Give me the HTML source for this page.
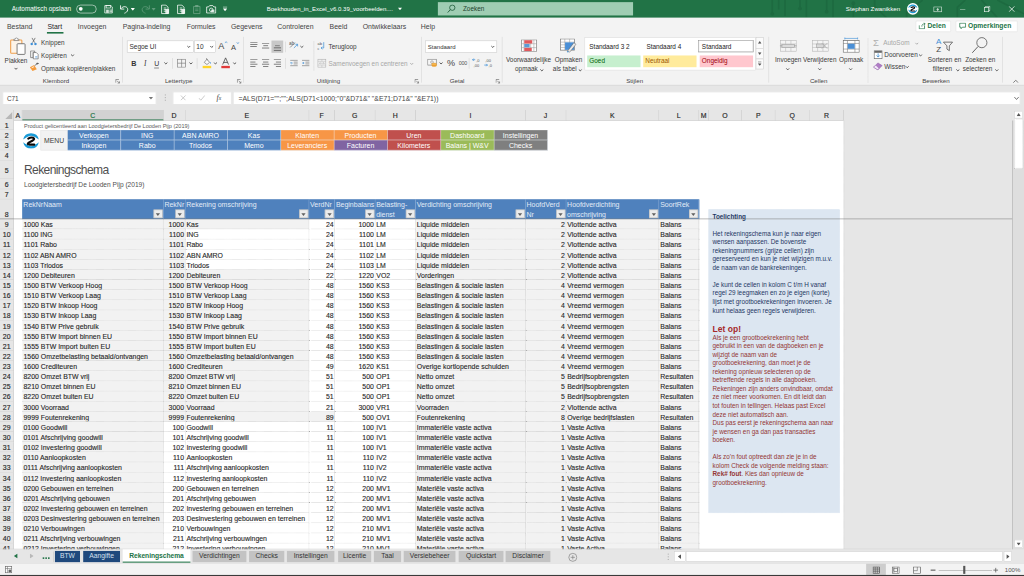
<!DOCTYPE html>
<html lang="nl"><head><meta charset="utf-8"><title>Boekhouden in Excel</title>
<style>
html,body{margin:0;padding:0;width:1024px;height:576px;overflow:hidden;background:#e6e6e6;}
#root{position:absolute;left:0;top:0;width:1920px;height:1080px;transform:scale(0.533333);transform-origin:0 0;font-family:"Liberation Sans",sans-serif;font-size:12px;color:#444;overflow:hidden;background:#e6e6e6;}
#root div,#root span,#root svg{position:absolute;box-sizing:border-box;white-space:nowrap;}
.ui{font-size:12px;color:#3b3b3b;line-height:16px;}
.c{text-align:center;}
.r{text-align:right;}
.b{font-weight:bold;}
.dis{color:#a6a6a6;}
.cell{-webkit-text-stroke:0.2px #262626;font-size:13px;line-height:21px;height:19px;color:#262626;overflow:hidden;background-clip:padding-box;border-right:1px dotted #a8a8a8;border-bottom:1px dotted #a8a8a8;}
.g{background:#f2f2f2;}
.w{background:#ffffff;}
.hd{background:#4f81bd;color:#e3ecf7;font-size:13.1px;line-height:19px;overflow:hidden;}
.rh{-webkit-text-stroke:0.3px #2b2b2b;left:0;width:26px;text-align:center;font-size:13px;color:#2b2b2b;line-height:21px;border-bottom:1px solid #cfcfcf;border-right:1px solid #c8c8c8;background:#e6e6e6;}
.ch{-webkit-text-stroke:0.3px currentColor;top:206px;height:19px;text-align:center;font-size:13px;color:#2b2b2b;line-height:21px;border-right:1px solid #c4c4c4;background:#e6e6e6;}
.mb{height:19px;color:#fff;font-size:13.1px;line-height:20px;text-align:center;border-right:1.5px solid #e8eef6;border-bottom:1.5px solid #e8eef6;}
.fb{width:17px;height:16px;background:#ececec;border:1px solid #b4b4b4;}
.fb:after{content:"";position:absolute;left:3.5px;top:5.5px;border-left:4px solid transparent;border-right:4px solid transparent;border-top:5px solid #606060;}
.tab{top:1032.5px;height:21px;font-size:12.6px;line-height:20px;text-align:center;color:#333;background:#c3c3c3;}
.sep{width:1px;background:#d4d4d4;top:69px;height:86px;}
.glabel{top:145px;font-size:11.6px;color:#444;line-height:14px;text-align:center;}
.dd:after{content:"";position:absolute;}
</style></head>
<body>
<div id="root">
<div class="" style="left:26px;top:225px;width:1556px;height:805px;background:#fff;"></div>
<div class="" style="left:0px;top:206px;width:1896px;height:20px;background:#e6e6e6;"></div>
<svg style="left:9px;top:209px" width="15" height="15" viewBox="0 0 15 15"><path d="M14 1 L14 14 L1 14 Z" fill="#b7b7b7"/></svg>
<div class="" style="left:25px;top:206px;width:1px;height:20px;background:#c4c4c4;"></div>
<div class="ch" style="left:26px;top:206px;width:16px;height:20px;">A</div>
<div class="ch" style="left:42px;top:206px;width:264.5px;height:20px;background:#d2d2d2;color:#217346;border-bottom:2.5px solid #217346;line-height:21px;">C</div>
<div class="ch" style="left:306.5px;top:206px;width:41.0px;height:20px;">D</div>
<div class="ch" style="left:347.5px;top:206px;width:232.0px;height:20px;">E</div>
<div class="ch" style="left:579.5px;top:206px;width:48.5px;height:20px;">F</div>
<div class="ch" style="left:628px;top:206px;width:75.5px;height:20px;">G</div>
<div class="ch" style="left:703.5px;top:206px;width:76.0px;height:20px;">H</div>
<div class="ch" style="left:779.5px;top:206px;width:206.0px;height:20px;">I</div>
<div class="ch" style="left:985.5px;top:206px;width:76.0px;height:20px;">J</div>
<div class="ch" style="left:1061.5px;top:206px;width:174.5px;height:20px;">K</div>
<div class="ch" style="left:1236px;top:206px;width:74.5px;height:20px;">L</div>
<div class="ch" style="left:1310.5px;top:206px;width:18.5px;height:20px;">M</div>
<div class="ch" style="left:1329px;top:206px;width:62px;height:20px;">O</div>
<div class="ch" style="left:1391px;top:206px;width:63px;height:20px;">P</div>
<div class="ch" style="left:1454px;top:206px;width:64px;height:20px;">Q</div>
<div class="ch" style="left:1518px;top:206px;width:64px;height:20px;">R</div>
<div class="" style="left:0px;top:225.2px;width:1582px;height:0.8px;background:#c9c9c9;"></div>
<div class="rh" style="left:0px;top:225px;width:26px;height:19px;">1</div>
<div class="rh" style="left:0px;top:244px;width:26px;height:19px;">2</div>
<div class="rh" style="left:0px;top:263px;width:26px;height:19px;">3</div>
<div class="rh" style="left:0px;top:282px;width:26px;height:19px;">4</div>
<div class="rh" style="left:0px;top:301px;width:26px;height:35px;line-height:39px;">5</div>
<div class="rh" style="left:0px;top:336px;width:26px;height:19px;">6</div>
<div class="rh" style="left:0px;top:355px;width:26px;height:19px;">7</div>
<div class="rh" style="left:0px;top:374px;width:26px;height:37px;line-height:56px;">8</div>
<div class="rh" style="left:0px;top:411px;width:26px;height:19px;">9</div>
<div class="rh" style="left:0px;top:430px;width:26px;height:19px;">10</div>
<div class="rh" style="left:0px;top:449px;width:26px;height:19px;">11</div>
<div class="rh" style="left:0px;top:468px;width:26px;height:19px;">12</div>
<div class="rh" style="left:0px;top:487px;width:26px;height:19px;">13</div>
<div class="rh" style="left:0px;top:506px;width:26px;height:19px;">14</div>
<div class="rh" style="left:0px;top:525px;width:26px;height:19px;">15</div>
<div class="rh" style="left:0px;top:544px;width:26px;height:19px;">16</div>
<div class="rh" style="left:0px;top:563px;width:26px;height:19px;">17</div>
<div class="rh" style="left:0px;top:582px;width:26px;height:19px;">18</div>
<div class="rh" style="left:0px;top:601px;width:26px;height:19px;">19</div>
<div class="rh" style="left:0px;top:620px;width:26px;height:19px;">20</div>
<div class="rh" style="left:0px;top:639px;width:26px;height:19px;">21</div>
<div class="rh" style="left:0px;top:658px;width:26px;height:19px;">22</div>
<div class="rh" style="left:0px;top:677px;width:26px;height:19px;">23</div>
<div class="rh" style="left:0px;top:696px;width:26px;height:19px;">24</div>
<div class="rh" style="left:0px;top:715px;width:26px;height:19px;">25</div>
<div class="rh" style="left:0px;top:734px;width:26px;height:19px;">26</div>
<div class="rh" style="left:0px;top:753px;width:26px;height:19px;">27</div>
<div class="rh" style="left:0px;top:772px;width:26px;height:19px;">28</div>
<div class="rh" style="left:0px;top:791px;width:26px;height:19px;">29</div>
<div class="rh" style="left:0px;top:810px;width:26px;height:19px;">30</div>
<div class="rh" style="left:0px;top:829px;width:26px;height:19px;">31</div>
<div class="rh" style="left:0px;top:848px;width:26px;height:19px;">32</div>
<div class="rh" style="left:0px;top:867px;width:26px;height:19px;">33</div>
<div class="rh" style="left:0px;top:886px;width:26px;height:19px;">34</div>
<div class="rh" style="left:0px;top:905px;width:26px;height:19px;">35</div>
<div class="rh" style="left:0px;top:924px;width:26px;height:19px;">36</div>
<div class="rh" style="left:0px;top:943px;width:26px;height:19px;">37</div>
<div class="rh" style="left:0px;top:962px;width:26px;height:19px;">38</div>
<div class="rh" style="left:0px;top:981px;width:26px;height:19px;">39</div>
<div class="rh" style="left:0px;top:1000px;width:26px;height:19px;">40</div>
<div class="rh" style="left:0px;top:1019px;width:26px;height:19px;">41</div>
<div class="" style="left:45px;top:229.3px;font-size:10.4px;color:#595959;line-height:15px;">Product gelicentieerd aan Loodgietersbedrijf De Looden Pijp (2019)</div>
<svg style="left:43.2px;top:249px" width="30.3" height="30.3" viewBox="0 0 32 32"><path d="M0.4 13.4 A16 16 0 0 1 31.6 13.4 Q27 10 24.5 8.6 Q16 2.6 7.5 8.6 Q5 10 0.4 13.4 Z" fill="#1a9bd7"/><path d="M0.4 18.6 A16 16 0 0 0 31.6 18.6 Q27 22 24.5 23.4 Q16 29.4 7.5 23.4 Q5 22 0.4 18.6 Z" fill="#1a9bd7"/><path d="M10.5 11.4 Q16 8.2 20.5 10 Q24.3 12.2 19.5 15.2 L11.5 19.5 Q7.2 22.8 12.5 23.3 L22.3 23.5" fill="none" stroke="#0c0c0c" stroke-width="4.2" stroke-linecap="round" stroke-linejoin="round"/></svg>
<div class="" style="left:76px;top:244px;width:51px;height:38px;background:#f2f2f2;border:1px solid #e3e3e3;"></div>
<div class="" style="left:76px;top:256px;font-size:12.8px;color:#3a3a3a;width:51px;text-align:center;line-height:18px;">MENU</div>
<div class="mb" style="left:126.5px;top:244px;width:100px;height:19px;background:#4f81bd;">Verkopen</div>
<div class="mb" style="left:226.5px;top:244px;width:100px;height:19px;background:#4f81bd;">ING</div>
<div class="mb" style="left:326.5px;top:244px;width:100px;height:19px;background:#4f81bd;">ABN AMRO</div>
<div class="mb" style="left:426.5px;top:244px;width:100px;height:19px;background:#4f81bd;">Kas</div>
<div class="mb" style="left:526.5px;top:244px;width:100px;height:19px;background:#f79646;">Klanten</div>
<div class="mb" style="left:626.5px;top:244px;width:100px;height:19px;background:#f79646;">Producten</div>
<div class="mb" style="left:726.5px;top:244px;width:100px;height:19px;background:#c0504d;">Uren</div>
<div class="mb" style="left:826.5px;top:244px;width:100px;height:19px;background:#9bbb59;">Dashboard</div>
<div class="mb" style="left:926.5px;top:244px;width:100px;height:19px;background:#7f7f7f;">Instellingen</div>
<div class="mb" style="left:126.5px;top:263px;width:100px;height:19px;background:#4f81bd;">Inkopen</div>
<div class="mb" style="left:226.5px;top:263px;width:100px;height:19px;background:#4f81bd;">Rabo</div>
<div class="mb" style="left:326.5px;top:263px;width:100px;height:19px;background:#4f81bd;">Triodos</div>
<div class="mb" style="left:426.5px;top:263px;width:100px;height:19px;background:#4f81bd;">Memo</div>
<div class="mb" style="left:526.5px;top:263px;width:100px;height:19px;background:#f79646;">Leveranciers</div>
<div class="mb" style="left:626.5px;top:263px;width:100px;height:19px;background:#8064a2;">Facturen</div>
<div class="mb" style="left:726.5px;top:263px;width:100px;height:19px;background:#c0504d;">Kilometers</div>
<div class="mb" style="left:826.5px;top:263px;width:100px;height:19px;background:#9bbb59;">Balans | W&amp;V</div>
<div class="mb" style="left:926.5px;top:263px;width:100px;height:19px;background:#7f7f7f;">Checks</div>
<div class="" style="left:45px;top:303px;font-size:22.6px;color:#505050;line-height:32px;letter-spacing:-1.15px;">Rekeningschema</div>
<div class="" style="left:45px;top:338px;font-size:12.4px;color:#505050;line-height:16px;">Loodgietersbedrijf De Looden Pijp (2019)</div>
<div class="" style="left:42px;top:374px;width:1268.5px;height:37px;background:#4f81bd;"></div>
<div class="hd" style="left:42px;top:374px;width:264.5px;height:37px;border-right:1px solid #a4bee0;"><span style="left:1.8px;top:1px">RekNrNaam</span><span style="left:1.8px;top:19px"></span></div>
<div class="fb" style="left:287.5px;top:393px;"></div>
<div class="hd" style="left:306.5px;top:374px;width:41.0px;height:37px;border-right:1px solid #a4bee0;"><span style="left:1.8px;top:1px">RekNr</span><span style="left:1.8px;top:19px"></span></div>
<div class="fb" style="left:328.5px;top:393px;"></div>
<div class="hd" style="left:347.5px;top:374px;width:232.0px;height:37px;border-right:1px solid #a4bee0;"><span style="left:1.8px;top:1px">Rekening omschrijving</span><span style="left:1.8px;top:19px"></span></div>
<div class="fb" style="left:560.5px;top:393px;"></div>
<div class="hd" style="left:579.5px;top:374px;width:48.5px;height:37px;border-right:1px solid #a4bee0;"><span style="left:1.8px;top:1px">VerdNr</span><span style="left:1.8px;top:19px"></span></div>
<div class="fb" style="left:609px;top:393px;"></div>
<div class="hd" style="left:628px;top:374px;width:75.5px;height:37px;border-right:1px solid #a4bee0;"><span style="left:1.8px;top:1px">Beginbalans</span><span style="left:1.8px;top:19px"></span></div>
<div class="fb" style="left:684.5px;top:393px;"></div>
<div class="hd" style="left:703.5px;top:374px;width:76.0px;height:37px;border-right:1px solid #a4bee0;"><span style="left:1.8px;top:1px">Belasting-</span><span style="left:1.8px;top:19px">dienst</span></div>
<div class="fb" style="left:760.5px;top:393px;"></div>
<div class="hd" style="left:779.5px;top:374px;width:206.0px;height:37px;border-right:1px solid #a4bee0;"><span style="left:1.8px;top:1px">Verdichting omschrijving</span><span style="left:1.8px;top:19px"></span></div>
<div class="fb" style="left:966.5px;top:393px;"></div>
<div class="hd" style="left:985.5px;top:374px;width:76.0px;height:37px;border-right:1px solid #a4bee0;"><span style="left:1.8px;top:1px">HoofdVerd</span><span style="left:1.8px;top:19px">Nr</span></div>
<div class="fb" style="left:1042.5px;top:393px;"></div>
<div class="hd" style="left:1061.5px;top:374px;width:174.5px;height:37px;border-right:1px solid #a4bee0;"><span style="left:1.8px;top:1px">Hoofdverdichting</span><span style="left:1.8px;top:19px">omschrijving</span></div>
<div class="fb" style="left:1217px;top:393px;"></div>
<div class="hd" style="left:1236px;top:374px;width:74.5px;height:37px;border-right:1px solid #a4bee0;"><span style="left:1.8px;top:1px">SoortRek</span><span style="left:1.8px;top:19px"></span></div>
<div class="fb" style="left:1291.5px;top:393px;"></div>
<div class="cell g" style="left:42px;top:411px;width:264.5px;height:19px;padding-left:2px;">1000 Kas</div>
<div class="cell g" style="left:306.5px;top:411px;width:41.0px;height:19px;text-align:right;padding-right:1.5px;">1000</div>
<div class="cell g" style="left:347.5px;top:411px;width:232.0px;height:19px;padding-left:2px;">Kas</div>
<div class="cell w" style="left:579.5px;top:411px;width:48.5px;height:19px;text-align:right;padding-right:1.5px;">24</div>
<div class="cell w" style="left:628px;top:411px;width:75.5px;height:19px;text-align:right;padding-right:1.5px;">1000</div>
<div class="cell w" style="left:703.5px;top:411px;width:76.0px;height:19px;padding-left:2px;">LM</div>
<div class="cell g" style="left:779.5px;top:411px;width:206.0px;height:19px;padding-left:2px;">Liquide middelen</div>
<div class="cell g" style="left:985.5px;top:411px;width:76.0px;height:19px;text-align:right;padding-right:1.5px;">2</div>
<div class="cell g" style="left:1061.5px;top:411px;width:174.5px;height:19px;padding-left:2px;">Vlottende activa</div>
<div class="cell g" style="left:1236px;top:411px;width:74.5px;height:19px;padding-left:2px;">Balans</div>
<div class="cell g" style="left:42px;top:430px;width:264.5px;height:19px;padding-left:2px;">1100 ING</div>
<div class="cell g" style="left:306.5px;top:430px;width:41.0px;height:19px;text-align:right;padding-right:1.5px;">1100</div>
<div class="cell w" style="left:347.5px;top:430px;width:232.0px;height:19px;padding-left:2px;">ING</div>
<div class="cell w" style="left:579.5px;top:430px;width:48.5px;height:19px;text-align:right;padding-right:1.5px;">24</div>
<div class="cell w" style="left:628px;top:430px;width:75.5px;height:19px;text-align:right;padding-right:1.5px;">1100</div>
<div class="cell w" style="left:703.5px;top:430px;width:76.0px;height:19px;padding-left:2px;">LM</div>
<div class="cell g" style="left:779.5px;top:430px;width:206.0px;height:19px;padding-left:2px;">Liquide middelen</div>
<div class="cell g" style="left:985.5px;top:430px;width:76.0px;height:19px;text-align:right;padding-right:1.5px;">2</div>
<div class="cell g" style="left:1061.5px;top:430px;width:174.5px;height:19px;padding-left:2px;">Vlottende activa</div>
<div class="cell g" style="left:1236px;top:430px;width:74.5px;height:19px;padding-left:2px;">Balans</div>
<div class="cell g" style="left:42px;top:449px;width:264.5px;height:19px;padding-left:2px;">1101 Rabo</div>
<div class="cell g" style="left:306.5px;top:449px;width:41.0px;height:19px;text-align:right;padding-right:1.5px;">1101</div>
<div class="cell w" style="left:347.5px;top:449px;width:232.0px;height:19px;padding-left:2px;">Rabo</div>
<div class="cell w" style="left:579.5px;top:449px;width:48.5px;height:19px;text-align:right;padding-right:1.5px;">24</div>
<div class="cell w" style="left:628px;top:449px;width:75.5px;height:19px;text-align:right;padding-right:1.5px;">1101</div>
<div class="cell w" style="left:703.5px;top:449px;width:76.0px;height:19px;padding-left:2px;">LM</div>
<div class="cell g" style="left:779.5px;top:449px;width:206.0px;height:19px;padding-left:2px;">Liquide middelen</div>
<div class="cell g" style="left:985.5px;top:449px;width:76.0px;height:19px;text-align:right;padding-right:1.5px;">2</div>
<div class="cell g" style="left:1061.5px;top:449px;width:174.5px;height:19px;padding-left:2px;">Vlottende activa</div>
<div class="cell g" style="left:1236px;top:449px;width:74.5px;height:19px;padding-left:2px;">Balans</div>
<div class="cell g" style="left:42px;top:468px;width:264.5px;height:19px;padding-left:2px;">1102 ABN AMRO</div>
<div class="cell g" style="left:306.5px;top:468px;width:41.0px;height:19px;text-align:right;padding-right:1.5px;">1102</div>
<div class="cell w" style="left:347.5px;top:468px;width:232.0px;height:19px;padding-left:2px;">ABN AMRO</div>
<div class="cell w" style="left:579.5px;top:468px;width:48.5px;height:19px;text-align:right;padding-right:1.5px;">24</div>
<div class="cell w" style="left:628px;top:468px;width:75.5px;height:19px;text-align:right;padding-right:1.5px;">1102</div>
<div class="cell w" style="left:703.5px;top:468px;width:76.0px;height:19px;padding-left:2px;">LM</div>
<div class="cell g" style="left:779.5px;top:468px;width:206.0px;height:19px;padding-left:2px;">Liquide middelen</div>
<div class="cell g" style="left:985.5px;top:468px;width:76.0px;height:19px;text-align:right;padding-right:1.5px;">2</div>
<div class="cell g" style="left:1061.5px;top:468px;width:174.5px;height:19px;padding-left:2px;">Vlottende activa</div>
<div class="cell g" style="left:1236px;top:468px;width:74.5px;height:19px;padding-left:2px;">Balans</div>
<div class="cell g" style="left:42px;top:487px;width:264.5px;height:19px;padding-left:2px;">1103 Triodos</div>
<div class="cell g" style="left:306.5px;top:487px;width:41.0px;height:19px;text-align:right;padding-right:1.5px;">1103</div>
<div class="cell w" style="left:347.5px;top:487px;width:232.0px;height:19px;padding-left:2px;">Triodos</div>
<div class="cell w" style="left:579.5px;top:487px;width:48.5px;height:19px;text-align:right;padding-right:1.5px;">24</div>
<div class="cell w" style="left:628px;top:487px;width:75.5px;height:19px;text-align:right;padding-right:1.5px;">1103</div>
<div class="cell w" style="left:703.5px;top:487px;width:76.0px;height:19px;padding-left:2px;">LM</div>
<div class="cell g" style="left:779.5px;top:487px;width:206.0px;height:19px;padding-left:2px;">Liquide middelen</div>
<div class="cell g" style="left:985.5px;top:487px;width:76.0px;height:19px;text-align:right;padding-right:1.5px;">2</div>
<div class="cell g" style="left:1061.5px;top:487px;width:174.5px;height:19px;padding-left:2px;">Vlottende activa</div>
<div class="cell g" style="left:1236px;top:487px;width:74.5px;height:19px;padding-left:2px;">Balans</div>
<div class="cell g" style="left:42px;top:506px;width:264.5px;height:19px;padding-left:2px;">1200 Debiteuren</div>
<div class="cell g" style="left:306.5px;top:506px;width:41.0px;height:19px;text-align:right;padding-right:1.5px;">1200</div>
<div class="cell g" style="left:347.5px;top:506px;width:232.0px;height:19px;padding-left:2px;">Debiteuren</div>
<div class="cell w" style="left:579.5px;top:506px;width:48.5px;height:19px;text-align:right;padding-right:1.5px;">22</div>
<div class="cell w" style="left:628px;top:506px;width:75.5px;height:19px;text-align:right;padding-right:1.5px;">1220</div>
<div class="cell w" style="left:703.5px;top:506px;width:76.0px;height:19px;padding-left:2px;">VO2</div>
<div class="cell g" style="left:779.5px;top:506px;width:206.0px;height:19px;padding-left:2px;">Vorderingen</div>
<div class="cell g" style="left:985.5px;top:506px;width:76.0px;height:19px;text-align:right;padding-right:1.5px;">2</div>
<div class="cell g" style="left:1061.5px;top:506px;width:174.5px;height:19px;padding-left:2px;">Vlottende activa</div>
<div class="cell g" style="left:1236px;top:506px;width:74.5px;height:19px;padding-left:2px;">Balans</div>
<div class="cell g" style="left:42px;top:525px;width:264.5px;height:19px;padding-left:2px;">1500 BTW Verkoop Hoog</div>
<div class="cell g" style="left:306.5px;top:525px;width:41.0px;height:19px;text-align:right;padding-right:1.5px;">1500</div>
<div class="cell g" style="left:347.5px;top:525px;width:232.0px;height:19px;padding-left:2px;">BTW Verkoop Hoog</div>
<div class="cell w" style="left:579.5px;top:525px;width:48.5px;height:19px;text-align:right;padding-right:1.5px;">48</div>
<div class="cell w" style="left:628px;top:525px;width:75.5px;height:19px;text-align:right;padding-right:1.5px;">1560</div>
<div class="cell w" style="left:703.5px;top:525px;width:76.0px;height:19px;padding-left:2px;">KS3</div>
<div class="cell g" style="left:779.5px;top:525px;width:206.0px;height:19px;padding-left:2px;">Belastingen &amp; sociale lasten</div>
<div class="cell g" style="left:985.5px;top:525px;width:76.0px;height:19px;text-align:right;padding-right:1.5px;">4</div>
<div class="cell g" style="left:1061.5px;top:525px;width:174.5px;height:19px;padding-left:2px;">Vreemd vermogen</div>
<div class="cell g" style="left:1236px;top:525px;width:74.5px;height:19px;padding-left:2px;">Balans</div>
<div class="cell g" style="left:42px;top:544px;width:264.5px;height:19px;padding-left:2px;">1510 BTW Verkoop Laag</div>
<div class="cell g" style="left:306.5px;top:544px;width:41.0px;height:19px;text-align:right;padding-right:1.5px;">1510</div>
<div class="cell g" style="left:347.5px;top:544px;width:232.0px;height:19px;padding-left:2px;">BTW Verkoop Laag</div>
<div class="cell w" style="left:579.5px;top:544px;width:48.5px;height:19px;text-align:right;padding-right:1.5px;">48</div>
<div class="cell w" style="left:628px;top:544px;width:75.5px;height:19px;text-align:right;padding-right:1.5px;">1560</div>
<div class="cell w" style="left:703.5px;top:544px;width:76.0px;height:19px;padding-left:2px;">KS3</div>
<div class="cell g" style="left:779.5px;top:544px;width:206.0px;height:19px;padding-left:2px;">Belastingen &amp; sociale lasten</div>
<div class="cell g" style="left:985.5px;top:544px;width:76.0px;height:19px;text-align:right;padding-right:1.5px;">4</div>
<div class="cell g" style="left:1061.5px;top:544px;width:174.5px;height:19px;padding-left:2px;">Vreemd vermogen</div>
<div class="cell g" style="left:1236px;top:544px;width:74.5px;height:19px;padding-left:2px;">Balans</div>
<div class="cell g" style="left:42px;top:563px;width:264.5px;height:19px;padding-left:2px;">1520 BTW Inkoop Hoog</div>
<div class="cell g" style="left:306.5px;top:563px;width:41.0px;height:19px;text-align:right;padding-right:1.5px;">1520</div>
<div class="cell g" style="left:347.5px;top:563px;width:232.0px;height:19px;padding-left:2px;">BTW Inkoop Hoog</div>
<div class="cell w" style="left:579.5px;top:563px;width:48.5px;height:19px;text-align:right;padding-right:1.5px;">48</div>
<div class="cell w" style="left:628px;top:563px;width:75.5px;height:19px;text-align:right;padding-right:1.5px;">1560</div>
<div class="cell w" style="left:703.5px;top:563px;width:76.0px;height:19px;padding-left:2px;">KS3</div>
<div class="cell g" style="left:779.5px;top:563px;width:206.0px;height:19px;padding-left:2px;">Belastingen &amp; sociale lasten</div>
<div class="cell g" style="left:985.5px;top:563px;width:76.0px;height:19px;text-align:right;padding-right:1.5px;">4</div>
<div class="cell g" style="left:1061.5px;top:563px;width:174.5px;height:19px;padding-left:2px;">Vreemd vermogen</div>
<div class="cell g" style="left:1236px;top:563px;width:74.5px;height:19px;padding-left:2px;">Balans</div>
<div class="cell g" style="left:42px;top:582px;width:264.5px;height:19px;padding-left:2px;">1530 BTW Inkoop Laag</div>
<div class="cell g" style="left:306.5px;top:582px;width:41.0px;height:19px;text-align:right;padding-right:1.5px;">1530</div>
<div class="cell g" style="left:347.5px;top:582px;width:232.0px;height:19px;padding-left:2px;">BTW Inkoop Laag</div>
<div class="cell w" style="left:579.5px;top:582px;width:48.5px;height:19px;text-align:right;padding-right:1.5px;">48</div>
<div class="cell w" style="left:628px;top:582px;width:75.5px;height:19px;text-align:right;padding-right:1.5px;">1560</div>
<div class="cell w" style="left:703.5px;top:582px;width:76.0px;height:19px;padding-left:2px;">KS3</div>
<div class="cell g" style="left:779.5px;top:582px;width:206.0px;height:19px;padding-left:2px;">Belastingen &amp; sociale lasten</div>
<div class="cell g" style="left:985.5px;top:582px;width:76.0px;height:19px;text-align:right;padding-right:1.5px;">4</div>
<div class="cell g" style="left:1061.5px;top:582px;width:174.5px;height:19px;padding-left:2px;">Vreemd vermogen</div>
<div class="cell g" style="left:1236px;top:582px;width:74.5px;height:19px;padding-left:2px;">Balans</div>
<div class="cell g" style="left:42px;top:601px;width:264.5px;height:19px;padding-left:2px;">1540 BTW Prive gebruik</div>
<div class="cell g" style="left:306.5px;top:601px;width:41.0px;height:19px;text-align:right;padding-right:1.5px;">1540</div>
<div class="cell g" style="left:347.5px;top:601px;width:232.0px;height:19px;padding-left:2px;">BTW Prive gebruik</div>
<div class="cell w" style="left:579.5px;top:601px;width:48.5px;height:19px;text-align:right;padding-right:1.5px;">48</div>
<div class="cell w" style="left:628px;top:601px;width:75.5px;height:19px;text-align:right;padding-right:1.5px;">1560</div>
<div class="cell w" style="left:703.5px;top:601px;width:76.0px;height:19px;padding-left:2px;">KS3</div>
<div class="cell g" style="left:779.5px;top:601px;width:206.0px;height:19px;padding-left:2px;">Belastingen &amp; sociale lasten</div>
<div class="cell g" style="left:985.5px;top:601px;width:76.0px;height:19px;text-align:right;padding-right:1.5px;">4</div>
<div class="cell g" style="left:1061.5px;top:601px;width:174.5px;height:19px;padding-left:2px;">Vreemd vermogen</div>
<div class="cell g" style="left:1236px;top:601px;width:74.5px;height:19px;padding-left:2px;">Balans</div>
<div class="cell g" style="left:42px;top:620px;width:264.5px;height:19px;padding-left:2px;">1550 BTW Import binnen EU</div>
<div class="cell g" style="left:306.5px;top:620px;width:41.0px;height:19px;text-align:right;padding-right:1.5px;">1550</div>
<div class="cell g" style="left:347.5px;top:620px;width:232.0px;height:19px;padding-left:2px;">BTW Import binnen EU</div>
<div class="cell w" style="left:579.5px;top:620px;width:48.5px;height:19px;text-align:right;padding-right:1.5px;">48</div>
<div class="cell w" style="left:628px;top:620px;width:75.5px;height:19px;text-align:right;padding-right:1.5px;">1560</div>
<div class="cell w" style="left:703.5px;top:620px;width:76.0px;height:19px;padding-left:2px;">KS3</div>
<div class="cell g" style="left:779.5px;top:620px;width:206.0px;height:19px;padding-left:2px;">Belastingen &amp; sociale lasten</div>
<div class="cell g" style="left:985.5px;top:620px;width:76.0px;height:19px;text-align:right;padding-right:1.5px;">4</div>
<div class="cell g" style="left:1061.5px;top:620px;width:174.5px;height:19px;padding-left:2px;">Vreemd vermogen</div>
<div class="cell g" style="left:1236px;top:620px;width:74.5px;height:19px;padding-left:2px;">Balans</div>
<div class="cell g" style="left:42px;top:639px;width:264.5px;height:19px;padding-left:2px;">1555 BTW Import buiten EU</div>
<div class="cell g" style="left:306.5px;top:639px;width:41.0px;height:19px;text-align:right;padding-right:1.5px;">1555</div>
<div class="cell g" style="left:347.5px;top:639px;width:232.0px;height:19px;padding-left:2px;">BTW Import buiten EU</div>
<div class="cell w" style="left:579.5px;top:639px;width:48.5px;height:19px;text-align:right;padding-right:1.5px;">48</div>
<div class="cell w" style="left:628px;top:639px;width:75.5px;height:19px;text-align:right;padding-right:1.5px;">1560</div>
<div class="cell w" style="left:703.5px;top:639px;width:76.0px;height:19px;padding-left:2px;">KS3</div>
<div class="cell g" style="left:779.5px;top:639px;width:206.0px;height:19px;padding-left:2px;">Belastingen &amp; sociale lasten</div>
<div class="cell g" style="left:985.5px;top:639px;width:76.0px;height:19px;text-align:right;padding-right:1.5px;">4</div>
<div class="cell g" style="left:1061.5px;top:639px;width:174.5px;height:19px;padding-left:2px;">Vreemd vermogen</div>
<div class="cell g" style="left:1236px;top:639px;width:74.5px;height:19px;padding-left:2px;">Balans</div>
<div class="cell g" style="left:42px;top:658px;width:264.5px;height:19px;padding-left:2px;">1560 Omzetbelasting betaald/ontvangen</div>
<div class="cell g" style="left:306.5px;top:658px;width:41.0px;height:19px;text-align:right;padding-right:1.5px;">1560</div>
<div class="cell g" style="left:347.5px;top:658px;width:232.0px;height:19px;padding-left:2px;">Omzetbelasting betaald/ontvangen</div>
<div class="cell w" style="left:579.5px;top:658px;width:48.5px;height:19px;text-align:right;padding-right:1.5px;">48</div>
<div class="cell w" style="left:628px;top:658px;width:75.5px;height:19px;text-align:right;padding-right:1.5px;">1560</div>
<div class="cell w" style="left:703.5px;top:658px;width:76.0px;height:19px;padding-left:2px;">KS3</div>
<div class="cell g" style="left:779.5px;top:658px;width:206.0px;height:19px;padding-left:2px;">Belastingen &amp; sociale lasten</div>
<div class="cell g" style="left:985.5px;top:658px;width:76.0px;height:19px;text-align:right;padding-right:1.5px;">4</div>
<div class="cell g" style="left:1061.5px;top:658px;width:174.5px;height:19px;padding-left:2px;">Vreemd vermogen</div>
<div class="cell g" style="left:1236px;top:658px;width:74.5px;height:19px;padding-left:2px;">Balans</div>
<div class="cell g" style="left:42px;top:677px;width:264.5px;height:19px;padding-left:2px;">1600 Crediteuren</div>
<div class="cell g" style="left:306.5px;top:677px;width:41.0px;height:19px;text-align:right;padding-right:1.5px;">1600</div>
<div class="cell g" style="left:347.5px;top:677px;width:232.0px;height:19px;padding-left:2px;">Crediteuren</div>
<div class="cell w" style="left:579.5px;top:677px;width:48.5px;height:19px;text-align:right;padding-right:1.5px;">49</div>
<div class="cell w" style="left:628px;top:677px;width:75.5px;height:19px;text-align:right;padding-right:1.5px;">1620</div>
<div class="cell w" style="left:703.5px;top:677px;width:76.0px;height:19px;padding-left:2px;">KS1</div>
<div class="cell g" style="left:779.5px;top:677px;width:206.0px;height:19px;padding-left:2px;">Overige kortlopende schulden</div>
<div class="cell g" style="left:985.5px;top:677px;width:76.0px;height:19px;text-align:right;padding-right:1.5px;">4</div>
<div class="cell g" style="left:1061.5px;top:677px;width:174.5px;height:19px;padding-left:2px;">Vreemd vermogen</div>
<div class="cell g" style="left:1236px;top:677px;width:74.5px;height:19px;padding-left:2px;">Balans</div>
<div class="cell g" style="left:42px;top:696px;width:264.5px;height:19px;padding-left:2px;">8200 Omzet BTW vrij</div>
<div class="cell g" style="left:306.5px;top:696px;width:41.0px;height:19px;text-align:right;padding-right:1.5px;">8200</div>
<div class="cell g" style="left:347.5px;top:696px;width:232.0px;height:19px;padding-left:2px;">Omzet BTW vrij</div>
<div class="cell w" style="left:579.5px;top:696px;width:48.5px;height:19px;text-align:right;padding-right:1.5px;">51</div>
<div class="cell w" style="left:628px;top:696px;width:75.5px;height:19px;text-align:right;padding-right:1.5px;">500</div>
<div class="cell w" style="left:703.5px;top:696px;width:76.0px;height:19px;padding-left:2px;">OP1</div>
<div class="cell g" style="left:779.5px;top:696px;width:206.0px;height:19px;padding-left:2px;">Netto omzet</div>
<div class="cell g" style="left:985.5px;top:696px;width:76.0px;height:19px;text-align:right;padding-right:1.5px;">5</div>
<div class="cell g" style="left:1061.5px;top:696px;width:174.5px;height:19px;padding-left:2px;">Bedrijfsopbrengsten</div>
<div class="cell g" style="left:1236px;top:696px;width:74.5px;height:19px;padding-left:2px;">Resultaten</div>
<div class="cell g" style="left:42px;top:715px;width:264.5px;height:19px;padding-left:2px;">8210 Omzet binnen EU</div>
<div class="cell g" style="left:306.5px;top:715px;width:41.0px;height:19px;text-align:right;padding-right:1.5px;">8210</div>
<div class="cell g" style="left:347.5px;top:715px;width:232.0px;height:19px;padding-left:2px;">Omzet binnen EU</div>
<div class="cell w" style="left:579.5px;top:715px;width:48.5px;height:19px;text-align:right;padding-right:1.5px;">51</div>
<div class="cell w" style="left:628px;top:715px;width:75.5px;height:19px;text-align:right;padding-right:1.5px;">500</div>
<div class="cell w" style="left:703.5px;top:715px;width:76.0px;height:19px;padding-left:2px;">OP1</div>
<div class="cell g" style="left:779.5px;top:715px;width:206.0px;height:19px;padding-left:2px;">Netto omzet</div>
<div class="cell g" style="left:985.5px;top:715px;width:76.0px;height:19px;text-align:right;padding-right:1.5px;">5</div>
<div class="cell g" style="left:1061.5px;top:715px;width:174.5px;height:19px;padding-left:2px;">Bedrijfsopbrengsten</div>
<div class="cell g" style="left:1236px;top:715px;width:74.5px;height:19px;padding-left:2px;">Resultaten</div>
<div class="cell g" style="left:42px;top:734px;width:264.5px;height:19px;padding-left:2px;">8220 Omzet buiten EU</div>
<div class="cell g" style="left:306.5px;top:734px;width:41.0px;height:19px;text-align:right;padding-right:1.5px;">8220</div>
<div class="cell g" style="left:347.5px;top:734px;width:232.0px;height:19px;padding-left:2px;">Omzet buiten EU</div>
<div class="cell w" style="left:579.5px;top:734px;width:48.5px;height:19px;text-align:right;padding-right:1.5px;">51</div>
<div class="cell w" style="left:628px;top:734px;width:75.5px;height:19px;text-align:right;padding-right:1.5px;">500</div>
<div class="cell w" style="left:703.5px;top:734px;width:76.0px;height:19px;padding-left:2px;">OP1</div>
<div class="cell g" style="left:779.5px;top:734px;width:206.0px;height:19px;padding-left:2px;">Netto omzet</div>
<div class="cell g" style="left:985.5px;top:734px;width:76.0px;height:19px;text-align:right;padding-right:1.5px;">5</div>
<div class="cell g" style="left:1061.5px;top:734px;width:174.5px;height:19px;padding-left:2px;">Bedrijfsopbrengsten</div>
<div class="cell g" style="left:1236px;top:734px;width:74.5px;height:19px;padding-left:2px;">Resultaten</div>
<div class="cell g" style="left:42px;top:753px;width:264.5px;height:19px;padding-left:2px;">3000 Voorraad</div>
<div class="cell g" style="left:306.5px;top:753px;width:41.0px;height:19px;text-align:right;padding-right:1.5px;">3000</div>
<div class="cell g" style="left:347.5px;top:753px;width:232.0px;height:19px;padding-left:2px;">Voorraad</div>
<div class="cell w" style="left:579.5px;top:753px;width:48.5px;height:19px;text-align:right;padding-right:1.5px;">21</div>
<div class="cell w" style="left:628px;top:753px;width:75.5px;height:19px;text-align:right;padding-right:1.5px;">3000</div>
<div class="cell w" style="left:703.5px;top:753px;width:76.0px;height:19px;padding-left:2px;">VR1</div>
<div class="cell g" style="left:779.5px;top:753px;width:206.0px;height:19px;padding-left:2px;">Voorraden</div>
<div class="cell g" style="left:985.5px;top:753px;width:76.0px;height:19px;text-align:right;padding-right:1.5px;">2</div>
<div class="cell g" style="left:1061.5px;top:753px;width:174.5px;height:19px;padding-left:2px;">Vlottende activa</div>
<div class="cell g" style="left:1236px;top:753px;width:74.5px;height:19px;padding-left:2px;">Balans</div>
<div class="cell g" style="left:42px;top:772px;width:264.5px;height:19px;padding-left:2px;">9999 Foutenrekening</div>
<div class="cell g" style="left:306.5px;top:772px;width:41.0px;height:19px;text-align:right;padding-right:1.5px;">9999</div>
<div class="cell g" style="left:347.5px;top:772px;width:232.0px;height:19px;padding-left:2px;">Foutenrekening</div>
<div class="cell g" style="left:579.5px;top:772px;width:48.5px;height:19px;text-align:right;padding-right:1.5px;">89</div>
<div class="cell w" style="left:628px;top:772px;width:75.5px;height:19px;text-align:right;padding-right:1.5px;">500</div>
<div class="cell w" style="left:703.5px;top:772px;width:76.0px;height:19px;padding-left:2px;">OV1</div>
<div class="cell g" style="left:779.5px;top:772px;width:206.0px;height:19px;padding-left:2px;">Foutenrekening</div>
<div class="cell g" style="left:985.5px;top:772px;width:76.0px;height:19px;text-align:right;padding-right:1.5px;">8</div>
<div class="cell g" style="left:1061.5px;top:772px;width:174.5px;height:19px;padding-left:2px;">Overige bedrijfslasten</div>
<div class="cell g" style="left:1236px;top:772px;width:74.5px;height:19px;padding-left:2px;">Resultaten</div>
<div class="cell g" style="left:42px;top:791px;width:264.5px;height:19px;padding-left:2px;">0100 Goodwill</div>
<div class="cell w" style="left:306.5px;top:791px;width:41.0px;height:19px;text-align:right;padding-right:1.5px;">100</div>
<div class="cell w" style="left:347.5px;top:791px;width:232.0px;height:19px;padding-left:2px;">Goodwill</div>
<div class="cell w" style="left:579.5px;top:791px;width:48.5px;height:19px;text-align:right;padding-right:1.5px;">11</div>
<div class="cell w" style="left:628px;top:791px;width:75.5px;height:19px;text-align:right;padding-right:1.5px;">100</div>
<div class="cell w" style="left:703.5px;top:791px;width:76.0px;height:19px;padding-left:2px;">IV1</div>
<div class="cell g" style="left:779.5px;top:791px;width:206.0px;height:19px;padding-left:2px;">Immateriële vaste activa</div>
<div class="cell g" style="left:985.5px;top:791px;width:76.0px;height:19px;text-align:right;padding-right:1.5px;">1</div>
<div class="cell g" style="left:1061.5px;top:791px;width:174.5px;height:19px;padding-left:2px;">Vaste Activa</div>
<div class="cell g" style="left:1236px;top:791px;width:74.5px;height:19px;padding-left:2px;">Balans</div>
<div class="cell g" style="left:42px;top:810px;width:264.5px;height:19px;padding-left:2px;">0101 Afschrijving goodwill</div>
<div class="cell w" style="left:306.5px;top:810px;width:41.0px;height:19px;text-align:right;padding-right:1.5px;">101</div>
<div class="cell w" style="left:347.5px;top:810px;width:232.0px;height:19px;padding-left:2px;">Afschrijving goodwill</div>
<div class="cell w" style="left:579.5px;top:810px;width:48.5px;height:19px;text-align:right;padding-right:1.5px;">11</div>
<div class="cell w" style="left:628px;top:810px;width:75.5px;height:19px;text-align:right;padding-right:1.5px;">100</div>
<div class="cell w" style="left:703.5px;top:810px;width:76.0px;height:19px;padding-left:2px;">IV1</div>
<div class="cell g" style="left:779.5px;top:810px;width:206.0px;height:19px;padding-left:2px;">Immateriële vaste activa</div>
<div class="cell g" style="left:985.5px;top:810px;width:76.0px;height:19px;text-align:right;padding-right:1.5px;">1</div>
<div class="cell g" style="left:1061.5px;top:810px;width:174.5px;height:19px;padding-left:2px;">Vaste Activa</div>
<div class="cell g" style="left:1236px;top:810px;width:74.5px;height:19px;padding-left:2px;">Balans</div>
<div class="cell g" style="left:42px;top:829px;width:264.5px;height:19px;padding-left:2px;">0102 Investering goodwill</div>
<div class="cell w" style="left:306.5px;top:829px;width:41.0px;height:19px;text-align:right;padding-right:1.5px;">102</div>
<div class="cell w" style="left:347.5px;top:829px;width:232.0px;height:19px;padding-left:2px;">Investering goodwill</div>
<div class="cell w" style="left:579.5px;top:829px;width:48.5px;height:19px;text-align:right;padding-right:1.5px;">11</div>
<div class="cell w" style="left:628px;top:829px;width:75.5px;height:19px;text-align:right;padding-right:1.5px;">100</div>
<div class="cell w" style="left:703.5px;top:829px;width:76.0px;height:19px;padding-left:2px;">IV1</div>
<div class="cell g" style="left:779.5px;top:829px;width:206.0px;height:19px;padding-left:2px;">Immateriële vaste activa</div>
<div class="cell g" style="left:985.5px;top:829px;width:76.0px;height:19px;text-align:right;padding-right:1.5px;">1</div>
<div class="cell g" style="left:1061.5px;top:829px;width:174.5px;height:19px;padding-left:2px;">Vaste Activa</div>
<div class="cell g" style="left:1236px;top:829px;width:74.5px;height:19px;padding-left:2px;">Balans</div>
<div class="cell g" style="left:42px;top:848px;width:264.5px;height:19px;padding-left:2px;">0110 Aanloopkosten</div>
<div class="cell w" style="left:306.5px;top:848px;width:41.0px;height:19px;text-align:right;padding-right:1.5px;">110</div>
<div class="cell w" style="left:347.5px;top:848px;width:232.0px;height:19px;padding-left:2px;">Aanloopkosten</div>
<div class="cell w" style="left:579.5px;top:848px;width:48.5px;height:19px;text-align:right;padding-right:1.5px;">11</div>
<div class="cell w" style="left:628px;top:848px;width:75.5px;height:19px;text-align:right;padding-right:1.5px;">110</div>
<div class="cell w" style="left:703.5px;top:848px;width:76.0px;height:19px;padding-left:2px;">IV2</div>
<div class="cell g" style="left:779.5px;top:848px;width:206.0px;height:19px;padding-left:2px;">Immateriële vaste activa</div>
<div class="cell g" style="left:985.5px;top:848px;width:76.0px;height:19px;text-align:right;padding-right:1.5px;">1</div>
<div class="cell g" style="left:1061.5px;top:848px;width:174.5px;height:19px;padding-left:2px;">Vaste Activa</div>
<div class="cell g" style="left:1236px;top:848px;width:74.5px;height:19px;padding-left:2px;">Balans</div>
<div class="cell g" style="left:42px;top:867px;width:264.5px;height:19px;padding-left:2px;">0111 Afschrijving aanloopkosten</div>
<div class="cell w" style="left:306.5px;top:867px;width:41.0px;height:19px;text-align:right;padding-right:1.5px;">111</div>
<div class="cell w" style="left:347.5px;top:867px;width:232.0px;height:19px;padding-left:2px;">Afschrijving aanloopkosten</div>
<div class="cell w" style="left:579.5px;top:867px;width:48.5px;height:19px;text-align:right;padding-right:1.5px;">11</div>
<div class="cell w" style="left:628px;top:867px;width:75.5px;height:19px;text-align:right;padding-right:1.5px;">110</div>
<div class="cell w" style="left:703.5px;top:867px;width:76.0px;height:19px;padding-left:2px;">IV2</div>
<div class="cell g" style="left:779.5px;top:867px;width:206.0px;height:19px;padding-left:2px;">Immateriële vaste activa</div>
<div class="cell g" style="left:985.5px;top:867px;width:76.0px;height:19px;text-align:right;padding-right:1.5px;">1</div>
<div class="cell g" style="left:1061.5px;top:867px;width:174.5px;height:19px;padding-left:2px;">Vaste Activa</div>
<div class="cell g" style="left:1236px;top:867px;width:74.5px;height:19px;padding-left:2px;">Balans</div>
<div class="cell g" style="left:42px;top:886px;width:264.5px;height:19px;padding-left:2px;">0112 Investering aanloopkosten</div>
<div class="cell w" style="left:306.5px;top:886px;width:41.0px;height:19px;text-align:right;padding-right:1.5px;">112</div>
<div class="cell w" style="left:347.5px;top:886px;width:232.0px;height:19px;padding-left:2px;">Investering aanloopkosten</div>
<div class="cell w" style="left:579.5px;top:886px;width:48.5px;height:19px;text-align:right;padding-right:1.5px;">11</div>
<div class="cell w" style="left:628px;top:886px;width:75.5px;height:19px;text-align:right;padding-right:1.5px;">110</div>
<div class="cell w" style="left:703.5px;top:886px;width:76.0px;height:19px;padding-left:2px;">IV2</div>
<div class="cell g" style="left:779.5px;top:886px;width:206.0px;height:19px;padding-left:2px;">Immateriële vaste activa</div>
<div class="cell g" style="left:985.5px;top:886px;width:76.0px;height:19px;text-align:right;padding-right:1.5px;">1</div>
<div class="cell g" style="left:1061.5px;top:886px;width:174.5px;height:19px;padding-left:2px;">Vaste Activa</div>
<div class="cell g" style="left:1236px;top:886px;width:74.5px;height:19px;padding-left:2px;">Balans</div>
<div class="cell g" style="left:42px;top:905px;width:264.5px;height:19px;padding-left:2px;">0200 Gebouwen en terreinen</div>
<div class="cell w" style="left:306.5px;top:905px;width:41.0px;height:19px;text-align:right;padding-right:1.5px;">200</div>
<div class="cell w" style="left:347.5px;top:905px;width:232.0px;height:19px;padding-left:2px;">Gebouwen en terreinen</div>
<div class="cell w" style="left:579.5px;top:905px;width:48.5px;height:19px;text-align:right;padding-right:1.5px;">12</div>
<div class="cell w" style="left:628px;top:905px;width:75.5px;height:19px;text-align:right;padding-right:1.5px;">200</div>
<div class="cell w" style="left:703.5px;top:905px;width:76.0px;height:19px;padding-left:2px;">MV1</div>
<div class="cell g" style="left:779.5px;top:905px;width:206.0px;height:19px;padding-left:2px;">Materiële vaste activa</div>
<div class="cell g" style="left:985.5px;top:905px;width:76.0px;height:19px;text-align:right;padding-right:1.5px;">1</div>
<div class="cell g" style="left:1061.5px;top:905px;width:174.5px;height:19px;padding-left:2px;">Vaste Activa</div>
<div class="cell g" style="left:1236px;top:905px;width:74.5px;height:19px;padding-left:2px;">Balans</div>
<div class="cell g" style="left:42px;top:924px;width:264.5px;height:19px;padding-left:2px;">0201 Afschrijving gebouwen</div>
<div class="cell w" style="left:306.5px;top:924px;width:41.0px;height:19px;text-align:right;padding-right:1.5px;">201</div>
<div class="cell w" style="left:347.5px;top:924px;width:232.0px;height:19px;padding-left:2px;">Afschrijving gebouwen</div>
<div class="cell w" style="left:579.5px;top:924px;width:48.5px;height:19px;text-align:right;padding-right:1.5px;">12</div>
<div class="cell w" style="left:628px;top:924px;width:75.5px;height:19px;text-align:right;padding-right:1.5px;">200</div>
<div class="cell w" style="left:703.5px;top:924px;width:76.0px;height:19px;padding-left:2px;">MV1</div>
<div class="cell g" style="left:779.5px;top:924px;width:206.0px;height:19px;padding-left:2px;">Materiële vaste activa</div>
<div class="cell g" style="left:985.5px;top:924px;width:76.0px;height:19px;text-align:right;padding-right:1.5px;">1</div>
<div class="cell g" style="left:1061.5px;top:924px;width:174.5px;height:19px;padding-left:2px;">Vaste Activa</div>
<div class="cell g" style="left:1236px;top:924px;width:74.5px;height:19px;padding-left:2px;">Balans</div>
<div class="cell g" style="left:42px;top:943px;width:264.5px;height:19px;padding-left:2px;">0202 Investering gebouwen en terreinen</div>
<div class="cell w" style="left:306.5px;top:943px;width:41.0px;height:19px;text-align:right;padding-right:1.5px;">202</div>
<div class="cell w" style="left:347.5px;top:943px;width:232.0px;height:19px;padding-left:2px;">Investering gebouwen en terreinen</div>
<div class="cell w" style="left:579.5px;top:943px;width:48.5px;height:19px;text-align:right;padding-right:1.5px;">12</div>
<div class="cell w" style="left:628px;top:943px;width:75.5px;height:19px;text-align:right;padding-right:1.5px;">200</div>
<div class="cell w" style="left:703.5px;top:943px;width:76.0px;height:19px;padding-left:2px;">MV1</div>
<div class="cell g" style="left:779.5px;top:943px;width:206.0px;height:19px;padding-left:2px;">Materiële vaste activa</div>
<div class="cell g" style="left:985.5px;top:943px;width:76.0px;height:19px;text-align:right;padding-right:1.5px;">1</div>
<div class="cell g" style="left:1061.5px;top:943px;width:174.5px;height:19px;padding-left:2px;">Vaste Activa</div>
<div class="cell g" style="left:1236px;top:943px;width:74.5px;height:19px;padding-left:2px;">Balans</div>
<div class="cell g" style="left:42px;top:962px;width:264.5px;height:19px;padding-left:2px;">0203 Desinvestering gebouwen en terreinen</div>
<div class="cell w" style="left:306.5px;top:962px;width:41.0px;height:19px;text-align:right;padding-right:1.5px;">203</div>
<div class="cell w" style="left:347.5px;top:962px;width:232.0px;height:19px;padding-left:2px;">Desinvestering gebouwen en terreinen</div>
<div class="cell w" style="left:579.5px;top:962px;width:48.5px;height:19px;text-align:right;padding-right:1.5px;">12</div>
<div class="cell w" style="left:628px;top:962px;width:75.5px;height:19px;text-align:right;padding-right:1.5px;">200</div>
<div class="cell w" style="left:703.5px;top:962px;width:76.0px;height:19px;padding-left:2px;">MV1</div>
<div class="cell g" style="left:779.5px;top:962px;width:206.0px;height:19px;padding-left:2px;">Materiële vaste activa</div>
<div class="cell g" style="left:985.5px;top:962px;width:76.0px;height:19px;text-align:right;padding-right:1.5px;">1</div>
<div class="cell g" style="left:1061.5px;top:962px;width:174.5px;height:19px;padding-left:2px;">Vaste Activa</div>
<div class="cell g" style="left:1236px;top:962px;width:74.5px;height:19px;padding-left:2px;">Balans</div>
<div class="cell g" style="left:42px;top:981px;width:264.5px;height:19px;padding-left:2px;">0210 Verbouwingen</div>
<div class="cell w" style="left:306.5px;top:981px;width:41.0px;height:19px;text-align:right;padding-right:1.5px;">210</div>
<div class="cell w" style="left:347.5px;top:981px;width:232.0px;height:19px;padding-left:2px;">Verbouwingen</div>
<div class="cell w" style="left:579.5px;top:981px;width:48.5px;height:19px;text-align:right;padding-right:1.5px;">12</div>
<div class="cell w" style="left:628px;top:981px;width:75.5px;height:19px;text-align:right;padding-right:1.5px;">210</div>
<div class="cell w" style="left:703.5px;top:981px;width:76.0px;height:19px;padding-left:2px;">MV1</div>
<div class="cell g" style="left:779.5px;top:981px;width:206.0px;height:19px;padding-left:2px;">Materiële vaste activa</div>
<div class="cell g" style="left:985.5px;top:981px;width:76.0px;height:19px;text-align:right;padding-right:1.5px;">1</div>
<div class="cell g" style="left:1061.5px;top:981px;width:174.5px;height:19px;padding-left:2px;">Vaste Activa</div>
<div class="cell g" style="left:1236px;top:981px;width:74.5px;height:19px;padding-left:2px;">Balans</div>
<div class="cell g" style="left:42px;top:1000px;width:264.5px;height:19px;padding-left:2px;">0211 Afschrijving verbouwingen</div>
<div class="cell w" style="left:306.5px;top:1000px;width:41.0px;height:19px;text-align:right;padding-right:1.5px;">211</div>
<div class="cell w" style="left:347.5px;top:1000px;width:232.0px;height:19px;padding-left:2px;">Afschrijving verbouwingen</div>
<div class="cell w" style="left:579.5px;top:1000px;width:48.5px;height:19px;text-align:right;padding-right:1.5px;">12</div>
<div class="cell w" style="left:628px;top:1000px;width:75.5px;height:19px;text-align:right;padding-right:1.5px;">210</div>
<div class="cell w" style="left:703.5px;top:1000px;width:76.0px;height:19px;padding-left:2px;">MV1</div>
<div class="cell g" style="left:779.5px;top:1000px;width:206.0px;height:19px;padding-left:2px;">Materiële vaste activa</div>
<div class="cell g" style="left:985.5px;top:1000px;width:76.0px;height:19px;text-align:right;padding-right:1.5px;">1</div>
<div class="cell g" style="left:1061.5px;top:1000px;width:174.5px;height:19px;padding-left:2px;">Vaste Activa</div>
<div class="cell g" style="left:1236px;top:1000px;width:74.5px;height:19px;padding-left:2px;">Balans</div>
<div class="cell g" style="left:42px;top:1019px;width:264.5px;height:19px;padding-left:2px;">0212 Investering verbouwingen</div>
<div class="cell w" style="left:306.5px;top:1019px;width:41.0px;height:19px;text-align:right;padding-right:1.5px;">212</div>
<div class="cell w" style="left:347.5px;top:1019px;width:232.0px;height:19px;padding-left:2px;">Investering verbouwingen</div>
<div class="cell w" style="left:579.5px;top:1019px;width:48.5px;height:19px;text-align:right;padding-right:1.5px;">12</div>
<div class="cell w" style="left:628px;top:1019px;width:75.5px;height:19px;text-align:right;padding-right:1.5px;">210</div>
<div class="cell w" style="left:703.5px;top:1019px;width:76.0px;height:19px;padding-left:2px;">MV1</div>
<div class="cell g" style="left:779.5px;top:1019px;width:206.0px;height:19px;padding-left:2px;">Materiële vaste activa</div>
<div class="cell g" style="left:985.5px;top:1019px;width:76.0px;height:19px;text-align:right;padding-right:1.5px;">1</div>
<div class="cell g" style="left:1061.5px;top:1019px;width:174.5px;height:19px;padding-left:2px;">Vaste Activa</div>
<div class="cell g" style="left:1236px;top:1019px;width:74.5px;height:19px;padding-left:2px;">Balans</div>
<div class="" style="left:1328px;top:392px;width:247px;height:570px;background:#dce6f1;border:1px dotted #eef3f9;"></div>
<div class="" style="left:1336px;top:399px;font-size:11.9px;font-weight:bold;color:#1f3864;line-height:15px;">Toelichting</div>
<div class="" style="left:1336px;top:431px;font-size:11.9px;color:#1f3864;line-height:15px;">Het rekeningschema kun je naar eigen</div>
<div class="" style="left:1336px;top:447.0px;font-size:11.9px;color:#1f3864;line-height:15px;">wensen aanpassen. De bovenste</div>
<div class="" style="left:1336px;top:463.0px;font-size:11.9px;color:#1f3864;line-height:15px;">rekeningnummers (grijze cellen) zijn</div>
<div class="" style="left:1336px;top:479.0px;font-size:11.9px;color:#1f3864;line-height:15px;">gereserveerd en kun je niet wijzigen m.u.v.</div>
<div class="" style="left:1336px;top:495.0px;font-size:11.9px;color:#1f3864;line-height:15px;">de naam van de bankrekeningen.</div>
<div class="" style="left:1336px;top:527.0px;font-size:11.9px;color:#1f3864;line-height:15px;">Je kunt de cellen in kolom C t/m H vanaf</div>
<div class="" style="left:1336px;top:543.0px;font-size:11.9px;color:#1f3864;line-height:15px;">regel 29 leegmaken en zo je eigen (korte)</div>
<div class="" style="left:1336px;top:559.0px;font-size:11.9px;color:#1f3864;line-height:15px;">lijst met grootboekrekeningen invoeren. Je</div>
<div class="" style="left:1336px;top:575.0px;font-size:11.9px;color:#1f3864;line-height:15px;">kunt helaas geen regels verwijderen.</div>
<div class="" style="left:1336px;top:606.5px;font-size:16px;font-weight:bold;color:#a5282a;line-height:20px;">Let op!</div>
<div class="" style="left:1336px;top:626px;font-size:11.9px;color:#943634;line-height:15px;">Als je een grootboekrekening hebt</div>
<div class="" style="left:1336px;top:642.0px;font-size:11.9px;color:#943634;line-height:15px;">gebruikt in een van de dagboeken en je</div>
<div class="" style="left:1336px;top:658.0px;font-size:11.9px;color:#943634;line-height:15px;">wijzigt de naam van de</div>
<div class="" style="left:1336px;top:674.0px;font-size:11.9px;color:#943634;line-height:15px;">grootboekrekening, dan moet je de</div>
<div class="" style="left:1336px;top:690.0px;font-size:11.9px;color:#943634;line-height:15px;">rekening opnieuw selecteren op de</div>
<div class="" style="left:1336px;top:706.0px;font-size:11.9px;color:#943634;line-height:15px;">betreffende regels in alle dagboeken.</div>
<div class="" style="left:1336px;top:722.0px;font-size:11.9px;color:#943634;line-height:15px;">Rekeningen zijn anders onvindbaar, omdat</div>
<div class="" style="left:1336px;top:738.0px;font-size:11.9px;color:#943634;line-height:15px;">ze niet meer voorkomen. En dit leidt dan</div>
<div class="" style="left:1336px;top:754.0px;font-size:11.9px;color:#943634;line-height:15px;">tot fouten in tellingen. Helaas past Excel</div>
<div class="" style="left:1336px;top:770.0px;font-size:11.9px;color:#943634;line-height:15px;">deze niet automatisch aan.</div>
<div class="" style="left:1336px;top:786.0px;font-size:11.9px;color:#943634;line-height:15px;">Dus pas eerst je rekeningschema aan naar</div>
<div class="" style="left:1336px;top:802.0px;font-size:11.9px;color:#943634;line-height:15px;">je wensen en ga dan pas transacties</div>
<div class="" style="left:1336px;top:818.0px;font-size:11.9px;color:#943634;line-height:15px;">boeken.</div>
<div class="" style="left:1336px;top:850.0px;font-size:11.9px;color:#943634;line-height:15px;">Als zo’n fout optreedt dan zie je in de</div>
<div class="" style="left:1336px;top:866.0px;font-size:11.9px;color:#943634;line-height:15px;">kolom Check de volgende melding staan:</div>
<div class="" style="left:1336px;top:882.0px;font-size:11.9px;color:#943634;line-height:15px;"><b>Rek# fout</b>. Kies dan opnieuw de</div>
<div class="" style="left:1336px;top:898.0px;font-size:11.9px;color:#943634;line-height:15px;">grootboekrekening.</div>
<div class="" style="left:1582px;top:225px;width:314px;height:805px;background:#e6e6e6;border-left:1px dotted #cfcfcf;"></div>
<div class="" style="left:0px;top:410.4px;width:1898px;height:1.1px;background:#7c7c7c;"></div>
<div class="" style="left:0px;top:1029px;width:1896px;height:1px;background:#c6c6c6;"></div>
<div class="" style="left:0px;top:0px;width:1920px;height:33.5px;background:#217346;"></div>
<svg style="left:1400px;top:0px" width="520" height="33" viewBox="0 0 520 33"><g fill="none" stroke="#1d6a40" stroke-width="3"><path d="M48 0 V24"/><path d="M60 0 V18"/><path d="M72 0 V30"/><path d="M100 0 V14"/><path d="M112 0 V33"/><path d="M150 0 V20"/><path d="M162 0 V33"/><path d="M200 6 V33"/><path d="M240 0 V12 L262 33"/><path d="M300 33 V22 L330 0"/><path d="M395 33 V14 L410 0"/><path d="M440 0 L470 33"/><path d="M470 0 L520 26"/></g><g fill="#1d6a40"><circle cx="48" cy="26" r="3.5"/><circle cx="100" cy="16" r="3.5"/><circle cx="150" cy="22" r="3.5"/><circle cx="200" cy="6" r="3.5"/></g></svg>
<div class="" style="left:22px;top:8px;font-size:12px;color:#fff;line-height:16px;">Automatisch opslaan</div>
<div class="" style="left:143px;top:8.5px;width:38px;height:16px;border:1.5px solid #fff;border-radius:8px;"></div>
<div class="" style="left:148px;top:13px;width:7px;height:7px;background:#fff;border-radius:4px;"></div>
<svg style="left:195px;top:9px" width="17" height="17" viewBox="0 0 17 17"><path d="M1.5 1.5 H13 L15.5 4 V15.5 H1.5 Z" fill="none" stroke="#fff" stroke-width="1.4"/><rect x="4" y="1.5" width="8" height="4.5" fill="none" stroke="#fff" stroke-width="1.2"/><rect x="4" y="9" width="5" height="6" fill="#fff" opacity=".8"/><path d="M10 10 h5 M10 13 h5" stroke="#fff" stroke-width="1.5"/></svg>
<svg style="left:223px;top:8px" width="20" height="18" viewBox="0 0 20 18"><path d="M3 2 V9 H10" fill="none" stroke="#fff" stroke-width="1.6"/><path d="M3.5 8.5 C8 2 17 4 16.5 10.5 C16 14 13 16 10 17" fill="none" stroke="#fff" stroke-width="1.6"/></svg>
<svg style="left:245px;top:15px" width="8" height="5" viewBox="0 0 8 5"><path d="M0 0 H8 L4 5 Z" fill="#fff"/></svg>
<svg style="left:263px;top:8px" width="20" height="18" viewBox="0 0 20 18"><path d="M17 2 V9 H10" fill="none" stroke="#5f9b7a" stroke-width="1.6"/><path d="M16.5 8.5 C12 2 3 4 3.5 10.5 C4 14 7 16 10 17" fill="none" stroke="#5f9b7a" stroke-width="1.6"/></svg>
<svg style="left:284px;top:15px" width="8" height="5" viewBox="0 0 8 5"><path d="M0 0 H8 L4 5 Z" fill="#5f9b7a"/></svg>
<svg style="left:301px;top:8px" width="18" height="19" viewBox="0 0 18 19"><g opacity="1"><path d="M2 1.5 H10 L14 5.5 V17.5 H2 Z" fill="none" stroke="#fff" stroke-width="1.5"/><path d="M6 7 h5 M6 10 h5 M6 13 h5" stroke="#fff" stroke-width="1.4"/><rect x="9" y="9" width="7" height="9" fill="#fff" opacity=".85"/></g></svg>
<svg style="left:331px;top:8px" width="18" height="19" viewBox="0 0 18 19"><g opacity="1"><path d="M2 1.5 H10 L14 5.5 V17.5 H2 Z" fill="none" stroke="#fff" stroke-width="1.5"/><path d="M6 7 h5 M6 10 h5 M6 13 h5" stroke="#fff" stroke-width="1.4"/><rect x="9" y="9" width="7" height="9" fill="#fff" opacity=".85"/></g></svg>
<svg style="left:361px;top:8px" width="18" height="19" viewBox="0 0 18 19"><g opacity=".35"><path d="M2 4 H14 V17.5 H2 Z" fill="none" stroke="#fff" stroke-width="1.5"/><rect x="5" y="1.5" width="6" height="4" fill="#fff"/><path d="M5 9 h6 M5 12 h6" stroke="#fff" stroke-width="1.3"/></g></svg>
<svg style="left:386px;top:9px" width="20" height="17" viewBox="0 0 20 17"><path d="M1.5 4 H5 L7 1.5 H13 L15 4 H18.5 V15.5 H1.5 Z" fill="none" stroke="#fff" stroke-width="1.5"/><circle cx="10" cy="9.5" r="3.3" fill="none" stroke="#fff" stroke-width="1.4"/><rect x="10" y="9" width="6" height="5" fill="#fff" opacity=".8"/></svg>
<svg style="left:417px;top:12px" width="10" height="10" viewBox="0 0 10 10"><path d="M1 1 H9" stroke="#fff" stroke-width="1.4"/><path d="M1 4 H9 L5 9 Z" fill="#fff"/></svg>
<div class="" style="left:500px;top:8px;font-size:11.3px;color:#fff;line-height:16px;">Boekhouden_in_Excel_v6.0.39_voorbeelden....</div>
<svg style="left:746px;top:14px" width="8" height="5" viewBox="0 0 8 5"><path d="M0 0 H8 L4 5 Z" fill="#fff"/></svg>
<div class="" style="left:821px;top:4px;width:366px;height:25px;background:#9fcdb3;"></div>
<svg style="left:838px;top:8px" width="17" height="17" viewBox="0 0 17 17"><circle cx="10" cy="6.5" r="5" fill="none" stroke="#1e5c3a" stroke-width="1.5"/><path d="M6.5 10 L1.5 15.5" stroke="#1e5c3a" stroke-width="1.7"/></svg>
<div class="" style="left:868px;top:8px;font-size:12px;color:#1b3f2b;line-height:16px;">Zoeken</div>
<div class="" style="left:1586px;top:8px;font-size:11.6px;color:#fff;line-height:16px;">Stephan Zwanikken</div>
<svg style="left:1700px;top:5px" width="23" height="23" viewBox="-5 -5 42 42"><circle cx="16" cy="16" r="20" fill="#fff"/><path d="M0.4 13.4 A16 16 0 0 1 31.6 13.4 Q27 10 24.5 8.6 Q16 2.6 7.5 8.6 Q5 10 0.4 13.4 Z" fill="#1a9bd7"/><path d="M0.4 18.6 A16 16 0 0 0 31.6 18.6 Q27 22 24.5 23.4 Q16 29.4 7.5 23.4 Q5 22 0.4 18.6 Z" fill="#1a9bd7"/><path d="M10.5 11.4 Q16 8.2 20.5 10 Q24.3 12.2 19.5 15.2 L11.5 19.5 Q7.2 22.8 12.5 23.3 L22.3 23.5" fill="none" stroke="#0c0c0c" stroke-width="4.2" stroke-linecap="round" stroke-linejoin="round"/></svg>
<svg style="left:1749.5px;top:11.5px" width="16.5" height="11" viewBox="0 0 16.5 11"><rect x="0.8" y="0.8" width="14.9" height="9.4" fill="none" stroke="#e6f0ea" stroke-width="1.4"/><path d="M5.5 6.5 L8.25 3.2 L11 6.5 Z" fill="#e6f0ea"/><path d="M8.25 5.5 V8.6" stroke="#e6f0ea" stroke-width="1.6"/></svg>
<div class="" style="left:1799.5px;top:16.6px;width:10.5px;height:1.4px;background:#fff;opacity:.7;"></div>
<svg style="left:1844.5px;top:10.5px" width="12" height="12" viewBox="0 0 12 12"><rect x="0.8" y="3" width="8" height="8" fill="none" stroke="#e6f0ea" stroke-width="1.3"/><path d="M3 3 V0.8 H11.2 V9 H9" fill="none" stroke="#e6f0ea" stroke-width="1.3"/></svg>
<svg style="left:1891px;top:10.5px" width="12" height="12" viewBox="0 0 12 12"><path d="M1 1 L11 11 M11 1 L1 11" stroke="#f0f6f2" stroke-width="1.5"/></svg>
<div class="" style="left:0px;top:33px;width:1920px;height:127px;background:#f3f3f3;"></div>
<div class="" style="left:13px;top:42px;font-size:13px;color:#444;line-height:17px;">Bestand</div>
<div class="" style="left:89px;top:42px;font-size:13px;color:#262626;line-height:17px;">Start</div>
<div class="" style="left:88px;top:60px;width:31px;height:3px;background:#217346;"></div>
<div class="" style="left:146px;top:42px;font-size:13px;color:#444;line-height:17px;">Invoegen</div>
<div class="" style="left:230px;top:42px;font-size:13px;color:#444;line-height:17px;">Pagina-indeling</div>
<div class="" style="left:350px;top:42px;font-size:13px;color:#444;line-height:17px;">Formules</div>
<div class="" style="left:433px;top:42px;font-size:13px;color:#444;line-height:17px;">Gegevens</div>
<div class="" style="left:520px;top:42px;font-size:13px;color:#444;line-height:17px;">Controleren</div>
<div class="" style="left:618px;top:42px;font-size:13px;color:#444;line-height:17px;">Beeld</div>
<div class="" style="left:680px;top:42px;font-size:13px;color:#444;line-height:17px;">Ontwikkelaars</div>
<div class="" style="left:789px;top:42px;font-size:13px;color:#444;line-height:17px;">Help</div>
<div class="" style="left:1716.5px;top:38.5px;width:66px;height:21px;background:#fff;border:1px solid #e1e1e1;border-radius:2px;"></div>
<svg style="left:1722px;top:42px" width="14" height="13" viewBox="0 0 14 13"><path d="M1.5 5.5 V12 H11.5 V5.5" fill="none" stroke="#217346" stroke-width="1.4"/><path d="M6.5 8 C6.5 4 8 2.5 12.5 2.5 M10 0.5 L12.8 2.6 L10 5" fill="none" stroke="#217346" stroke-width="1.3"/></svg>
<div class="" style="left:1739px;top:41px;font-size:12.6px;font-weight:bold;color:#217346;line-height:16px;">Delen</div>
<div class="" style="left:1792px;top:38.5px;width:115.5px;height:21px;background:#fff;border:1px solid #e1e1e1;border-radius:2px;"></div>
<svg style="left:1798px;top:42px" width="14" height="13" viewBox="0 0 14 13"><path d="M1.5 1.5 H12.5 V9 H6.5 L4 11.8 V9 H1.5 Z" fill="none" stroke="#217346" stroke-width="1.4"/></svg>
<div class="" style="left:1815px;top:41px;font-size:12.6px;font-weight:bold;color:#217346;line-height:16px;">Opmerkingen</div>
<div class="" style="left:0px;top:159px;width:1920px;height:2px;background:#dadada;"></div>
<svg style="left:18px;top:70px" width="32" height="34" viewBox="0 0 32 34"><rect x="2" y="5" width="21" height="25" rx="1.5" fill="#fdf4e8" stroke="#f0a04c" stroke-width="2"/><path d="M8 6 V3.5 H10.5 C10.5 0 15 0 15 3.5 H17.5 V6 Z" fill="#fff" stroke="#777" stroke-width="1.3"/><rect x="14" y="12" width="15" height="20" rx="1.5" fill="#fdfdfd" stroke="#666" stroke-width="1.6"/></svg>
<div class="ui" style="left:4px;top:106px;width:52px;text-align:center;">Plakken</div>
<svg style="left:26px;top:126px" width="8" height="6" viewBox="0 0 8 6"><path d="M1.2 1.2 L4 4 L6.8 1.2" fill="none" stroke="#4a4a4a" stroke-width="1.7"/></svg>
<svg style="left:56px;top:70px" width="14" height="16" viewBox="0 0 14 16"><path d="M4 1 L9 10 M10 1 L5 10" stroke="#555" stroke-width="1.3"/><circle cx="3.5" cy="12.5" r="2.3" fill="#3f8fd6"/><circle cx="10.5" cy="12.5" r="2.3" fill="#3f8fd6"/></svg>
<div class="ui" style="left:77px;top:72.5px;">Knippen</div>
<svg style="left:56px;top:94px" width="18" height="18" viewBox="0 0 18 18"><path d="M1.5 1.5 H9 V4 H6 V14 H1.5 Z" fill="#fafafa" stroke="#666" stroke-width="1.3"/><path d="M6.5 4.5 H12 L15.5 8 V16.5 H6.5 Z" fill="#fff" stroke="#666" stroke-width="1.3"/><path d="M10 12 h4 M10 14.5 h4" stroke="#4a8fd6" stroke-width="1"/></svg>
<div class="ui" style="left:77px;top:96.5px;">Kopiëren</div>
<svg style="left:132px;top:101px" width="8" height="6" viewBox="0 0 8 6"><path d="M1.2 1.2 L4 4 L6.8 1.2" fill="none" stroke="#4a4a4a" stroke-width="1.7"/></svg>
<svg style="left:55px;top:117px" width="20" height="17" viewBox="0 0 20 17"><path d="M1 9 L9 5 L14 13 L6 16 Z" fill="#f59b3c"/><path d="M4.5 10 L9 8" stroke="#fff" stroke-width="1.5"/><path d="M10 6 L16 1.5 M13 2 h5 M15 0 v4" stroke="#555" stroke-width="1.4" fill="none"/></svg>
<div class="ui" style="left:77px;top:120.5px;">Opmaak kopiëren/plakken</div>
<div class="glabel" style="left:60px;top:145px;width:90px;">Klembord</div>
<svg style="left:216px;top:148px" width="9" height="9" viewBox="0 0 9 9"><path d="M1 7 V1 H7" fill="none" stroke="#666" stroke-width="1.2"/><path d="M3.5 3.5 L8 8 M8 4.5 V8 H4.5" fill="none" stroke="#666" stroke-width="1.2"/></svg>
<div class="sep" style="left:229px;top:69px;width:1px;height:86px;"></div>
<div class="" style="left:238px;top:76px;width:125px;height:23px;background:#fff;border:1px solid #c6c6c6;"></div>
<div class="ui" style="left:243px;top:80px;font-size:12.3px;color:#333;letter-spacing:-0.2px;">Segoe UI</div>
<svg style="left:350px;top:85px" width="8" height="6" viewBox="0 0 8 6"><path d="M1.2 1.2 L4 4 L6.8 1.2" fill="none" stroke="#4a4a4a" stroke-width="1.7"/></svg>
<div class="" style="left:364px;top:76px;width:41px;height:23px;background:#fff;border:1px solid #c6c6c6;"></div>
<div class="ui" style="left:368px;top:80px;font-size:12.3px;color:#333;">10</div>
<svg style="left:393px;top:85px" width="8" height="6" viewBox="0 0 8 6"><path d="M1.2 1.2 L4 4 L6.8 1.2" fill="none" stroke="#4a4a4a" stroke-width="1.7"/></svg>
<div class="ui" style="left:409px;top:75px;font-size:17px;line-height:22px;color:#444;">A</div>
<svg style="left:421px;top:77px" width="6" height="5" viewBox="0 0 6 5"><path d="M0.5 4 L3 1 L5.5 4" fill="none" stroke="#3f8fd6" stroke-width="1.2"/></svg>
<div class="ui" style="left:433px;top:78px;font-size:14px;line-height:20px;color:#444;">A</div>
<svg style="left:443px;top:78px" width="6" height="5" viewBox="0 0 6 5"><path d="M0.5 1 L3 4 L5.5 1" fill="none" stroke="#3f8fd6" stroke-width="1.2"/></svg>
<div class="ui" style="left:246px;top:110px;font-size:13.5px;font-weight:bold;color:#333;line-height:18px;">B</div>
<div class="ui" style="left:270px;top:110px;font-size:13.5px;font-style:italic;font-family:'Liberation Serif',serif;color:#333;line-height:18px;">I</div>
<div class="ui" style="left:289px;top:110px;font-size:13px;color:#333;line-height:17px;border-bottom:1.2px solid #333;">U</div>
<svg style="left:307px;top:116px" width="8" height="6" viewBox="0 0 8 6"><path d="M1.2 1.2 L4 4 L6.8 1.2" fill="none" stroke="#4a4a4a" stroke-width="1.7"/></svg>
<div class="" style="left:323px;top:109px;width:1px;height:20px;background:#d0d0d0;"></div>
<svg style="left:332px;top:110px" width="17" height="17" viewBox="0 0 17 17"><rect x="1" y="1" width="15" height="15" fill="none" stroke="#777" stroke-width="1.2"/><path d="M8.5 1 V16 M1 8.5 H16" stroke="#777" stroke-width="1.2"/></svg>
<svg style="left:354px;top:116px" width="8" height="6" viewBox="0 0 8 6"><path d="M1.2 1.2 L4 4 L6.8 1.2" fill="none" stroke="#4a4a4a" stroke-width="1.7"/></svg>
<div class="" style="left:369px;top:109px;width:1px;height:20px;background:#d0d0d0;"></div>
<svg style="left:378px;top:107px" width="20" height="22" viewBox="0 0 20 22"><path d="M5 10 L10 4 L15 10 L10 14 Z" fill="#fafafa" stroke="#666" stroke-width="1.2"/><path d="M9 2 L11 6" stroke="#666" stroke-width="1.2"/><path d="M16.5 9 q1.8 2.5 0 4 q-1.8 -1.5 0 -4" fill="#3f8fd6"/><rect x="2" y="16.5" width="16" height="4.5" fill="#ffd428"/></svg>
<svg style="left:400px;top:116px" width="8" height="6" viewBox="0 0 8 6"><path d="M1.2 1.2 L4 4 L6.8 1.2" fill="none" stroke="#4a4a4a" stroke-width="1.7"/></svg>
<svg style="left:414px;top:107px" width="18" height="22" viewBox="0 0 18 22"><path d="M3.5 14 L9 1.5 L14.5 14 M5.5 10 H12.5" fill="none" stroke="#444" stroke-width="1.5"/><rect x="1" y="16.5" width="16" height="4.5" fill="#e03a3a"/></svg>
<svg style="left:436px;top:116px" width="8" height="6" viewBox="0 0 8 6"><path d="M1.2 1.2 L4 4 L6.8 1.2" fill="none" stroke="#4a4a4a" stroke-width="1.7"/></svg>
<div class="glabel" style="left:290px;top:145px;width:90px;">Lettertype</div>
<svg style="left:444px;top:148px" width="9" height="9" viewBox="0 0 9 9"><path d="M1 7 V1 H7" fill="none" stroke="#666" stroke-width="1.2"/><path d="M3.5 3.5 L8 8 M8 4.5 V8 H4.5" fill="none" stroke="#666" stroke-width="1.2"/></svg>
<div class="sep" style="left:456px;top:69px;width:1px;height:86px;"></div>
<svg style="left:468.8px;top:78.6px" width="14.3" height="9.600000000000009" viewBox="0 0 14.3 9.600000000000009"><rect x="0" y="0.0" width="14.3" height="1.5" fill="#666"/><rect x="0" y="3.8" width="14.3" height="1.5" fill="#666"/><rect x="0" y="7.6" width="12.5" height="1.5" fill="#666"/></svg>
<svg style="left:491px;top:81.3px" width="14.3" height="10.299999999999997" viewBox="0 0 14.3 10.299999999999997"><rect x="0.0" y="0.0" width="14.3" height="1.5" fill="#666"/><rect x="2.6500000000000004" y="4.0" width="9" height="1.5" fill="#666"/><rect x="0.0" y="8.3" width="14.3" height="1.5" fill="#666"/></svg>
<div class="" style="left:508.7px;top:75.8px;width:22px;height:23px;background:#c8c8c8;"></div>
<svg style="left:512.8px;top:85px" width="14.3" height="10.599999999999994" viewBox="0 0 14.3 10.599999999999994"><rect x="2.6500000000000004" y="0" width="9" height="1.5" fill="#555"/><rect x="0.0" y="4" width="14.3" height="1.5" fill="#555"/><rect x="0.0" y="8.6" width="14.3" height="1.5" fill="#555"/></svg>
<div class="" style="left:535px;top:78px;width:1px;height:20px;background:#d0d0d0;"></div>
<svg style="left:541px;top:75px" width="20" height="20" viewBox="0 0 20 20"><path d="M3 14 L12 5" stroke="#666" stroke-width="1.3"/><text x="1" y="10" font-size="9" fill="#555" font-family="Liberation Sans">ab</text><path d="M10 15 L17 8 M17 8 h-4 M17 8 v4" stroke="#3f8fd6" stroke-width="1.4" fill="none"/></svg>
<svg style="left:562px;top:85px" width="8" height="6" viewBox="0 0 8 6"><path d="M1.2 1.2 L4 4 L6.8 1.2" fill="none" stroke="#4a4a4a" stroke-width="1.7"/></svg>
<div class="" style="left:588px;top:74px;width:1px;height:58px;border-left:1px dotted #b8b8b8;"></div>
<svg style="left:595px;top:76px" width="17" height="19" viewBox="0 0 17 19"><text x="0" y="8" font-size="8" fill="#555" font-family="Liberation Sans">ab</text><text x="0" y="17" font-size="8" fill="#555" font-family="Liberation Sans">c</text><path d="M12 3 V14 H7 M9.5 11.5 L7 14 L9.5 16.5" fill="none" stroke="#3f8fd6" stroke-width="1.3"/></svg>
<div class="ui" style="left:616px;top:79px;">Terugloop</div>
<svg style="left:468.8px;top:111.2px" width="14.3" height="14.899999999999991" viewBox="0 0 14.3 14.899999999999991"><rect x="0" y="0.0" width="14.3" height="1.5" fill="#666"/><rect x="0" y="4.6" width="10" height="1.5" fill="#666"/><rect x="0" y="8.6" width="14.3" height="1.5" fill="#666"/><rect x="0" y="12.9" width="10" height="1.5" fill="#666"/></svg>
<svg style="left:491px;top:111.2px" width="14.3" height="14.899999999999991" viewBox="0 0 14.3 14.899999999999991"><rect x="0.0" y="0.0" width="14.3" height="1.5" fill="#666"/><rect x="2.1500000000000004" y="4.6" width="10" height="1.5" fill="#666"/><rect x="0.0" y="8.6" width="14.3" height="1.5" fill="#666"/><rect x="2.1500000000000004" y="12.9" width="10" height="1.5" fill="#666"/></svg>
<svg style="left:512.8px;top:111.2px" width="14.3" height="14.899999999999991" viewBox="0 0 14.3 14.899999999999991"><rect x="0.0" y="0.0" width="14.3" height="1.5" fill="#666"/><rect x="4.300000000000001" y="4.6" width="10" height="1.5" fill="#666"/><rect x="0.0" y="8.6" width="14.3" height="1.5" fill="#666"/><rect x="4.300000000000001" y="12.9" width="10" height="1.5" fill="#666"/></svg>
<div class="" style="left:535px;top:109px;width:1px;height:20px;background:#d0d0d0;"></div>
<svg style="left:543.5px;top:111px" width="15" height="16" viewBox="0 0 18 16"><path d="M0 1 H17 M8 5 H17 M8 9 H17 M0 13 H17" stroke="#666" stroke-width="1.3"/><path d="M6 7 H1 M3.2 4.8 L1 7 L3.2 9.2" stroke="#3f8fd6" stroke-width="1.4" fill="none"/></svg>
<svg style="left:566px;top:111px" width="15" height="16" viewBox="0 0 18 16"><path d="M0 1 H17 M8 5 H17 M8 9 H17 M0 13 H17" stroke="#666" stroke-width="1.3"/><path d="M0 7 H5 M2.8 4.8 L5 7 L2.8 9.2" stroke="#3f8fd6" stroke-width="1.4" fill="none"/></svg>
<svg style="left:595px;top:110px" width="17" height="17" viewBox="0 0 17 17"><rect x="1" y="1" width="15" height="15" fill="none" stroke="#aaa" stroke-width="1.2"/><path d="M1 5 H16 M1 12 H16 M8.5 1 V5 M8.5 12 V16" stroke="#bbb" stroke-width="1"/><path d="M4 8.5 H13 M6 6.5 L4 8.5 L6 10.5 M11 6.5 L13 8.5 L11 10.5" stroke="#b5b5b5" stroke-width="1.1" fill="none"/></svg>
<div class="ui dis" style="left:616px;top:112px;">Samenvoegen en centreren</div>
<svg style="left:768px;top:117px" width="8" height="6" viewBox="0 0 8 6"><path d="M1.2 1.2 L4 4 L6.8 1.2" fill="none" stroke="#aaa" stroke-width="1.7"/></svg>
<div class="glabel" style="left:571px;top:145px;width:90px;">Uitlijning</div>
<svg style="left:777px;top:148px" width="9" height="9" viewBox="0 0 9 9"><path d="M1 7 V1 H7" fill="none" stroke="#666" stroke-width="1.2"/><path d="M3.5 3.5 L8 8 M8 4.5 V8 H4.5" fill="none" stroke="#666" stroke-width="1.2"/></svg>
<div class="sep" style="left:790px;top:69px;width:1px;height:86px;"></div>
<div class="" style="left:797px;top:76px;width:135px;height:23px;background:#fff;border:1px solid #c6c6c6;"></div>
<div class="ui" style="left:802px;top:80px;font-size:11.3px;color:#333;">Standaard</div>
<svg style="left:920px;top:85px" width="8" height="6" viewBox="0 0 8 6"><path d="M1.2 1.2 L4 4 L6.8 1.2" fill="none" stroke="#4a4a4a" stroke-width="1.7"/></svg>
<svg style="left:801px;top:110px" width="19" height="17" viewBox="0 0 19 17"><rect x="1" y="1" width="16" height="11" fill="#f7f7f7" stroke="#777" stroke-width="1.2"/><circle cx="9" cy="6.5" r="2.5" fill="none" stroke="#777"/><ellipse cx="13" cy="13" rx="5" ry="2.2" fill="#f0a030"/><ellipse cx="13" cy="10.5" rx="5" ry="2.2" fill="#f8b84e" stroke="#d88a20" stroke-width=".6"/></svg>
<svg style="left:823px;top:116px" width="8" height="6" viewBox="0 0 8 6"><path d="M1.2 1.2 L4 4 L6.8 1.2" fill="none" stroke="#4a4a4a" stroke-width="1.7"/></svg>
<div class="ui" style="left:838px;top:106px;font-size:17px;line-height:24px;color:#444;">%</div>
<div class="ui" style="left:860px;top:112px;font-size:10px;line-height:14px;color:#555;letter-spacing:-0.3px;">000</div>
<div class="" style="left:879px;top:109px;width:1px;height:20px;background:#d0d0d0;"></div>
<svg style="left:885px;top:108px" width="18" height="20" viewBox="0 0 18 20"><path d="M6 4 H1 M3.2 1.8 L1 4 L3.2 6.2" stroke="#3f8fd6" stroke-width="1.4" fill="none"/><text x="8" y="8" font-size="7.5" fill="#555" font-family="Liberation Sans">,0</text><text x="3" y="18" font-size="7.5" fill="#555" font-family="Liberation Sans">,00</text></svg>
<svg style="left:907px;top:108px" width="18" height="20" viewBox="0 0 18 20"><text x="3" y="8" font-size="7.5" fill="#555" font-family="Liberation Sans">,00</text><path d="M1 14 H7 M4.8 11.8 L7 14 L4.8 16.2" stroke="#3f8fd6" stroke-width="1.4" fill="none"/><text x="9" y="18" font-size="7.5" fill="#555" font-family="Liberation Sans">,0</text></svg>
<div class="glabel" style="left:812px;top:145px;width:90px;">Getal</div>
<svg style="left:929px;top:148px" width="9" height="9" viewBox="0 0 9 9"><path d="M1 7 V1 H7" fill="none" stroke="#666" stroke-width="1.2"/><path d="M3.5 3.5 L8 8 M8 4.5 V8 H4.5" fill="none" stroke="#666" stroke-width="1.2"/></svg>
<div class="sep" style="left:941px;top:69px;width:1px;height:86px;"></div>
<svg style="left:977px;top:74px" width="30" height="23" viewBox="0 0 30 23"><rect x="0.7" y="0.7" width="28.6" height="21.6" fill="#fff" stroke="#777" stroke-width="1.3"/><path d="M0.7 8 H29.3 M0.7 15.3 H29.3 M5.5 0.7 V22.3 M18 0.7 V22.3 M24 0.7 V22.3" stroke="#9a9a9a" stroke-width="1"/><rect x="6" y="1.4" width="15" height="6.2" fill="#e0595d"/><rect x="6" y="8.5" width="10" height="6.3" fill="#5b9bd5"/><rect x="6" y="15.8" width="14" height="6" fill="#e0595d"/></svg>
<div class="ui" style="left:945px;top:105px;width:92px;text-align:center;">Voorwaardelijke</div>
<div class="ui" style="left:945px;top:122px;width:84px;text-align:center;">opmaak</div>
<svg style="left:1012px;top:129px" width="8" height="6" viewBox="0 0 8 6"><path d="M1.2 1.2 L4 4 L6.8 1.2" fill="none" stroke="#4a4a4a" stroke-width="1.7"/></svg>
<svg style="left:1050px;top:72px" width="32" height="27" viewBox="0 0 32 27"><rect x="1" y="1" width="26" height="21" fill="#fff" stroke="#777" stroke-width="1.3"/><path d="M1 7 H27 M1 12 H27 M1 17 H27 M9 1 V22 M18 1 V22" stroke="#999" stroke-width="1"/><rect x="9.5" y="7.5" width="17" height="14" fill="#4a8fd6"/><path d="M14 24 L26 8 L30 11 L18 26 Z" fill="#e8e8e8" stroke="#666" stroke-width="1"/><path d="M13 26.5 L14 23 L17 25.5 Z" fill="#3f8fd6"/></svg>
<div class="ui" style="left:1036px;top:105px;width:60px;text-align:center;">Opmaken</div>
<div class="ui" style="left:1030px;top:122px;width:58px;text-align:center;">als tabel</div>
<svg style="left:1084px;top:129px" width="8" height="6" viewBox="0 0 8 6"><path d="M1.2 1.2 L4 4 L6.8 1.2" fill="none" stroke="#4a4a4a" stroke-width="1.7"/></svg>
<div class="" style="left:1096px;top:70px;width:321px;height:62px;background:#fff;border:1px solid #d6d6d6;"></div>
<div class="ui" style="left:1105px;top:79px;color:#222;">Standaard 3 2</div>
<div class="ui" style="left:1212px;top:79px;color:#222;">Standaard 4</div>
<div class="" style="left:1309px;top:75px;width:104px;height:23px;border:1.5px solid #8c8c8c;background:#fff;box-shadow:inset 0 0 0 1px #d9d9d9;"></div>
<div class="ui" style="left:1316px;top:79px;color:#222;">Standaard</div>
<div class="" style="left:1101px;top:104px;width:100px;height:22px;background:#c6efce;"></div>
<div class="ui" style="left:1105px;top:107px;color:#006100;">Goed</div>
<div class="" style="left:1206px;top:104px;width:100px;height:22px;background:#ffeb9c;"></div>
<div class="ui" style="left:1210px;top:107px;color:#9c5700;">Neutraal</div>
<div class="" style="left:1312px;top:104px;width:100px;height:22px;background:#ffc7ce;"></div>
<div class="ui" style="left:1316px;top:107px;color:#9c0006;">Ongeldig</div>
<div class="" style="left:1417px;top:70px;width:15px;height:21px;background:#fbfbfb;border:1px solid #c9c9c9;"></div>
<div class="" style="left:1417px;top:90px;width:15px;height:21px;background:#fbfbfb;border:1px solid #c9c9c9;"></div>
<div class="" style="left:1417px;top:110px;width:15px;height:20px;background:#fbfbfb;border:1px solid #c9c9c9;"></div>
<svg style="left:1421px;top:77px" width="7" height="5" viewBox="0 0 7 5"><path d="M0 5 H7 L3.5 0 Z" fill="#555"/></svg>
<svg style="left:1421px;top:98px" width="7" height="5" viewBox="0 0 7 5"><path d="M0 0 H7 L3.5 5 Z" fill="#555"/></svg>
<svg style="left:1421px;top:115px" width="7" height="9" viewBox="0 0 7 9"><path d="M0 1 H7" stroke="#555" stroke-width="1.2"/><path d="M0 4 H7 L3.5 8.5 Z" fill="#555"/></svg>
<div class="glabel" style="left:1145px;top:145px;width:90px;">Stijlen</div>
<div class="sep" style="left:1441px;top:69px;width:1px;height:86px;"></div>
<svg style="left:1462px;top:73px" width="32" height="25" viewBox="0 0 32 25"><rect x="1" y="3" width="30" height="20" fill="#f4f4f4" stroke="#b4b4b4" stroke-width="1.1"/><path d="M1 9.5 H31 M1 16 H31 M11 3 V23 M21 3 V23" stroke="#b4b4b4" stroke-width="1"/><rect x="4" y="10" width="24" height="6" fill="#dcdcdc" stroke="#9a9a9a" stroke-width="1"/><path d="M0 13 h5 M27 13 h5" stroke="#9a9a9a" stroke-width="1.6"/></svg>
<div class="ui" style="left:1448px;top:105px;width:60px;text-align:center;">Invoegen</div>
<svg style="left:1473px;top:127px" width="8" height="6" viewBox="0 0 8 6"><path d="M1.2 1.2 L4 4 L6.8 1.2" fill="none" stroke="#4a4a4a" stroke-width="1.7"/></svg>
<svg style="left:1522px;top:73px" width="32" height="25" viewBox="0 0 32 25"><rect x="1" y="3" width="30" height="20" fill="#f4f4f4" stroke="#b4b4b4" stroke-width="1.1"/><path d="M1 9.5 H31 M1 16 H31 M11 3 V23 M21 3 V23" stroke="#b4b4b4" stroke-width="1"/><rect x="9" y="9.5" width="14" height="7" fill="#d9d9d9" stroke="#9a9a9a" stroke-width="1"/><path d="M19 8 L29 18 M29 8 L19 18" stroke="#b0b0b0" stroke-width="1.7"/></svg>
<div class="ui" style="left:1503px;top:105px;width:68px;text-align:center;">Verwijderen</div>
<svg style="left:1533px;top:127px" width="8" height="6" viewBox="0 0 8 6"><path d="M1.2 1.2 L4 4 L6.8 1.2" fill="none" stroke="#4a4a4a" stroke-width="1.7"/></svg>
<svg style="left:1580px;top:70px" width="32" height="29" viewBox="0 0 32 29"><path d="M4 2 H28 M4 0 V4 M28 0 V4" stroke="#3f8fd6" stroke-width="1.2"/><rect x="1" y="6" width="30" height="22" fill="#fff" stroke="#666" stroke-width="1.3"/><path d="M1 11.5 H31 M1 22 H31 M9 6 V28 M23 6 V28" stroke="#777" stroke-width="1"/><rect x="9.5" y="12" width="13" height="9.5" fill="#4a8fd6"/></svg>
<div class="ui" style="left:1567px;top:105px;width:58px;text-align:center;">Opmaak</div>
<svg style="left:1591px;top:127px" width="8" height="6" viewBox="0 0 8 6"><path d="M1.2 1.2 L4 4 L6.8 1.2" fill="none" stroke="#4a4a4a" stroke-width="1.7"/></svg>
<div class="glabel" style="left:1490px;top:145px;width:90px;">Cellen</div>
<div class="sep" style="left:1627px;top:69px;width:1px;height:86px;background:none;border-left:1px dotted #c4c4c4;"></div>
<div class="ui" style="left:1637px;top:68px;font-size:18px;line-height:24px;color:#b0b0b0;">Σ</div>
<div class="ui dis" style="left:1656px;top:73px;">AutoSom</div>
<svg style="left:1715px;top:79px" width="8" height="6" viewBox="0 0 8 6"><path d="M1.2 1.2 L4 4 L6.8 1.2" fill="none" stroke="#aaa" stroke-width="1.7"/></svg>
<svg style="left:1638px;top:94px" width="17" height="17" viewBox="0 0 17 17"><rect x="1" y="1" width="15" height="15" fill="#fff" stroke="#666" stroke-width="1.3"/><rect x="1.5" y="1.5" width="14" height="3.5" fill="#666"/><path d="M8.5 6 V13 M5.5 10 L8.5 13 L11.5 10" stroke="#3f8fd6" stroke-width="1.5" fill="none"/></svg>
<div class="ui" style="left:1658px;top:95px;">Doorvoeren</div>
<svg style="left:1722px;top:101px" width="8" height="6" viewBox="0 0 8 6"><path d="M1.2 1.2 L4 4 L6.8 1.2" fill="none" stroke="#4a4a4a" stroke-width="1.7"/></svg>
<svg style="left:1637px;top:116px" width="19" height="16" viewBox="0 0 19 16"><path d="M1 10 L9 2 L17 7 L9 15 Z" fill="#b07cc6" stroke="#8a56a6" stroke-width="1"/><path d="M1 10 L5 6 L11 12 L9 15 Z" fill="#f4ecf8" stroke="#8a56a6" stroke-width=".8"/></svg>
<div class="ui" style="left:1658px;top:117px;">Wissen</div>
<svg style="left:1697px;top:123px" width="8" height="6" viewBox="0 0 8 6"><path d="M1.2 1.2 L4 4 L6.8 1.2" fill="none" stroke="#4a4a4a" stroke-width="1.7"/></svg>
<svg style="left:1754px;top:70px" width="36" height="30" viewBox="0 0 36 30"><text x="1" y="12" font-size="15" fill="#3f8fd6" font-family="Liberation Sans">A</text><text x="1.5" y="28" font-size="15" fill="#444" font-family="Liberation Sans">Z</text><path d="M15 9 H32 L26 16 V25 L21.5 22 V16 Z" fill="none" stroke="#555" stroke-width="1.5"/></svg>
<div class="ui" style="left:1738px;top:105px;width:66px;text-align:center;">Sorteren en</div>
<div class="ui" style="left:1738px;top:122px;width:58px;text-align:center;">filteren</div>
<svg style="left:1792px;top:129px" width="8" height="6" viewBox="0 0 8 6"><path d="M1.2 1.2 L4 4 L6.8 1.2" fill="none" stroke="#4a4a4a" stroke-width="1.7"/></svg>
<svg style="left:1820px;top:69px" width="36" height="32" viewBox="0 0 36 32"><circle cx="21" cy="11" r="9.5" fill="none" stroke="#555" stroke-width="1.5"/><path d="M14 18 L3 30" stroke="#555" stroke-width="1.7"/></svg>
<div class="ui" style="left:1806px;top:105px;width:64px;text-align:center;">Zoeken en</div>
<div class="ui" style="left:1800px;top:122px;width:66px;text-align:center;">selecteren</div>
<svg style="left:1865px;top:129px" width="8" height="6" viewBox="0 0 8 6"><path d="M1.2 1.2 L4 4 L6.8 1.2" fill="none" stroke="#4a4a4a" stroke-width="1.7"/></svg>
<div class="glabel" style="left:1710px;top:145px;width:90px;">Bewerken</div>
<div class="sep" style="left:1879px;top:69px;width:1px;height:86px;"></div>
<svg style="left:1899px;top:149px" width="11" height="7" viewBox="0 0 11 7"><path d="M1 6 L5.5 1.5 L10 6" fill="none" stroke="#555" stroke-width="1.4"/></svg>
<div class="" style="left:0px;top:161px;width:1920px;height:45px;background:#e6e6e6;"></div>
<div class="" style="left:5px;top:171.5px;width:288px;height:24px;background:#fff;border:1px solid #dedede;"></div>
<div class="ui" style="left:13px;top:177px;font-size:12px;color:#444;">C71</div>
<svg style="left:279px;top:182px" width="8" height="4.5" viewBox="0 0 8 4.5"><path d="M0 0 H8 L4 4.5 Z" fill="#777"/></svg>
<div class="" style="left:309px;top:177px;width:2px;height:2px;background:#b0b0b0;"></div>
<div class="" style="left:309px;top:182px;width:2px;height:2px;background:#b0b0b0;"></div>
<div class="" style="left:309px;top:187px;width:2px;height:2px;background:#b0b0b0;"></div>
<div class="" style="left:324px;top:171.5px;width:110px;height:24px;background:#fff;border:1px solid #dedede;"></div>
<svg style="left:338px;top:178px" width="11" height="11" viewBox="0 0 11 11"><path d="M1 1 L10 10 M10 1 L1 10" stroke="#b5b5b5" stroke-width="1.3"/></svg>
<svg style="left:372px;top:178px" width="13" height="11" viewBox="0 0 13 11"><path d="M1 6 L4.5 10 L12 1" fill="none" stroke="#b5b5b5" stroke-width="1.3"/></svg>
<div class="ui" style="left:406px;top:174px;font-family:'Liberation Serif',serif;font-size:15px;line-height:18px;color:#444;"><i>f</i><span style="position:static;font-size:10.5px;font-style:italic;">x</span></div>
<div class="" style="left:437px;top:171.5px;width:1476px;height:24px;background:#fff;border:1px solid #dedede;"></div>
<div class="ui" style="left:447px;top:177px;font-size:12.9px;color:#444;">=ALS(D71="";"";ALS(D71&lt;1000;"0"&amp;D71&amp;" "&amp;E71;D71&amp;" "&amp;E71))</div>
<svg style="left:1901px;top:181px" width="10" height="7" viewBox="0 0 10 7"><path d="M1 1 L5 5.5 L9 1" fill="none" stroke="#555" stroke-width="1.5"/></svg>
<div class="" style="left:0px;top:1030px;width:1920px;height:26px;background:#e6e6e6;"></div>
<svg style="left:26px;top:1038px" width="7" height="9" viewBox="0 0 7 9"><path d="M7 0 V9 L0 4.5 Z" fill="#217346"/></svg>
<svg style="left:56px;top:1038px" width="7" height="9" viewBox="0 0 7 9"><path d="M0 0 V9 L7 4.5 Z" fill="#b9b9b9"/></svg>
<div class="" style="left:80px;top:1045px;width:3px;height:2.5px;background:#217346;"></div>
<div class="" style="left:85px;top:1045px;width:3px;height:2.5px;background:#217346;"></div>
<div class="" style="left:90px;top:1045px;width:3px;height:2.5px;background:#217346;"></div>
<div class="" style="left:100px;top:1034px;width:1px;height:20px;background:#c6c6c6;"></div>
<div class="tab" style="left:103px;top:1032.5px;width:47px;height:21px;background:#1f497d;color:#d5e0ef;">BTW</div>
<div class="tab" style="left:156px;top:1032.5px;width:69px;height:21px;background:#1f497d;color:#d5e0ef;">Aangifte</div>
<div class="tab" style="left:230px;top:1030px;width:127px;height:25px;background:#fff;color:#217346;font-weight:bold;border-bottom:2.5px solid #217346;line-height:26px;letter-spacing:-0.1px;">Rekeningschema</div>
<div class="tab" style="left:361px;top:1032.5px;width:101px;height:21px;">Verdichtingen</div>
<div class="tab" style="left:467px;top:1032.5px;width:66px;height:21px;">Checks</div>
<div class="tab" style="left:538px;top:1032.5px;width:89px;height:21px;">Instellingen</div>
<div class="tab" style="left:634px;top:1032.5px;width:62px;height:21px;">Licentie</div>
<div class="tab" style="left:701px;top:1032.5px;width:51px;height:21px;">Taal</div>
<div class="tab" style="left:757px;top:1032.5px;width:97px;height:21px;">Versiebeheer</div>
<div class="tab" style="left:860px;top:1032.5px;width:84px;height:21px;">Quickstart</div>
<div class="tab" style="left:948px;top:1032.5px;width:84px;height:21px;">Disclaimer</div>
<svg style="left:1065px;top:1036px" width="18" height="18" viewBox="0 0 18 18"><circle cx="9" cy="9" r="7.5" fill="none" stroke="#7a7a7a" stroke-width="1.2"/><path d="M9 5 V13 M5 9 H13" stroke="#7a7a7a" stroke-width="1.2"/></svg>
<div class="" style="left:1252px;top:1038px;width:2px;height:2px;background:#b0b0b0;"></div>
<div class="" style="left:1252px;top:1043px;width:2px;height:2px;background:#b0b0b0;"></div>
<div class="" style="left:1252px;top:1048px;width:2px;height:2px;background:#b0b0b0;"></div>
<div class="" style="left:1264px;top:1034px;width:22px;height:19px;background:#fff;border:1px solid #cfcfcf;"></div>
<svg style="left:1271px;top:1039px" width="6" height="9" viewBox="0 0 6 9"><path d="M6 0 V9 L0 4.5 Z" fill="#555"/></svg>
<div class="" style="left:1286px;top:1034px;width:594px;height:19px;background:#fff;border:1px solid #cfcfcf;"></div>
<div class="" style="left:1882px;top:1034px;width:15px;height:19px;background:#fff;border:1px solid #cfcfcf;"></div>
<svg style="left:1887px;top:1039px" width="6" height="9" viewBox="0 0 6 9"><path d="M0 0 V9 L6 4.5 Z" fill="#555"/></svg>
<div class="" style="left:0px;top:1056px;width:1920px;height:24px;background:#f3f3f3;border-top:1px solid #dcdcdc;"></div>
<svg style="left:9px;top:1061px" width="14" height="14" viewBox="0 0 14 14"><rect x="1" y="1" width="12" height="12" fill="#fff" stroke="#666" stroke-width="1.2"/><path d="M1 5 H13 M5 1 V13" stroke="#666" stroke-width="1"/><circle cx="9.5" cy="9.5" r="2.8" fill="#666"/></svg>
<div class="" style="left:1624px;top:1057px;width:37px;height:23px;background:#cdcdcd;"></div>
<svg style="left:1636px;top:1062px" width="14" height="14" viewBox="0 0 14 14"><rect x="1" y="1" width="12" height="12" fill="none" stroke="#444" stroke-width="1.2"/><path d="M1 5 H13 M1 9 H13 M5 1 V13 M9 1 V13" stroke="#444" stroke-width="1"/></svg>
<svg style="left:1672px;top:1062px" width="15" height="14" viewBox="0 0 15 14"><rect x="1" y="1" width="13" height="12" fill="none" stroke="#555" stroke-width="1.2"/><rect x="4" y="4" width="7" height="6" fill="none" stroke="#555" stroke-width="1"/><path d="M4 1 V13 M11 1 V13" stroke="#555" stroke-width=".8"/></svg>
<svg style="left:1712px;top:1062px" width="15" height="14" viewBox="0 0 15 14"><rect x="1" y="1" width="13" height="12" fill="none" stroke="#555" stroke-width="1.2"/><path d="M1 8 H8 V1" stroke="#555" stroke-width="1" fill="none"/></svg>
<div class="" style="left:1745px;top:1068px;width:9px;height:1.5px;background:#555;"></div>
<div class="" style="left:1760px;top:1068.5px;width:100px;height:1px;background:#9a9a9a;"></div>
<div class="" style="left:1806px;top:1061px;width:4px;height:15px;background:#555;"></div>
<svg style="left:1862px;top:1064px" width="10" height="10" viewBox="0 0 10 10"><path d="M5 0.5 V9.5 M0.5 5 H9.5" stroke="#555" stroke-width="1.4"/></svg>
<div class="ui" style="left:1884px;top:1061px;font-size:11.4px;color:#555;line-height:14px;">100%</div>
<div class="" style="left:0px;top:1078px;width:1920px;height:2px;background:#3a3a3a;"></div>
<div class="" style="left:1897px;top:206px;width:23px;height:20px;background:#e6e6e6;"></div>
<div class="" style="left:1899px;top:226px;width:21px;height:804px;background:#dedede;"></div>
<div class="" style="left:1897.6px;top:226px;width:1.4px;height:804px;background:#a4a4a4;"></div>
<div class="" style="left:1902px;top:208px;width:15.5px;height:14px;background:#fff;border:1px solid #cfcfcf;"></div>
<svg style="left:1905.5px;top:212px" width="8" height="6" viewBox="0 0 8 6"><path d="M0 6 H8 L4 0 Z" fill="#555"/></svg>
<div class="" style="left:1902px;top:222.6px;width:15.5px;height:93px;background:#fff;border:1px dotted #c4c4c4;"></div>
<div class="" style="left:1902px;top:1012px;width:15.5px;height:15px;background:#fff;border:1px solid #cfcfcf;"></div>
<svg style="left:1905.5px;top:1017px" width="8" height="6" viewBox="0 0 8 6"><path d="M0 0 H8 L4 6 Z" fill="#555"/></svg>
</div>
</body></html>
